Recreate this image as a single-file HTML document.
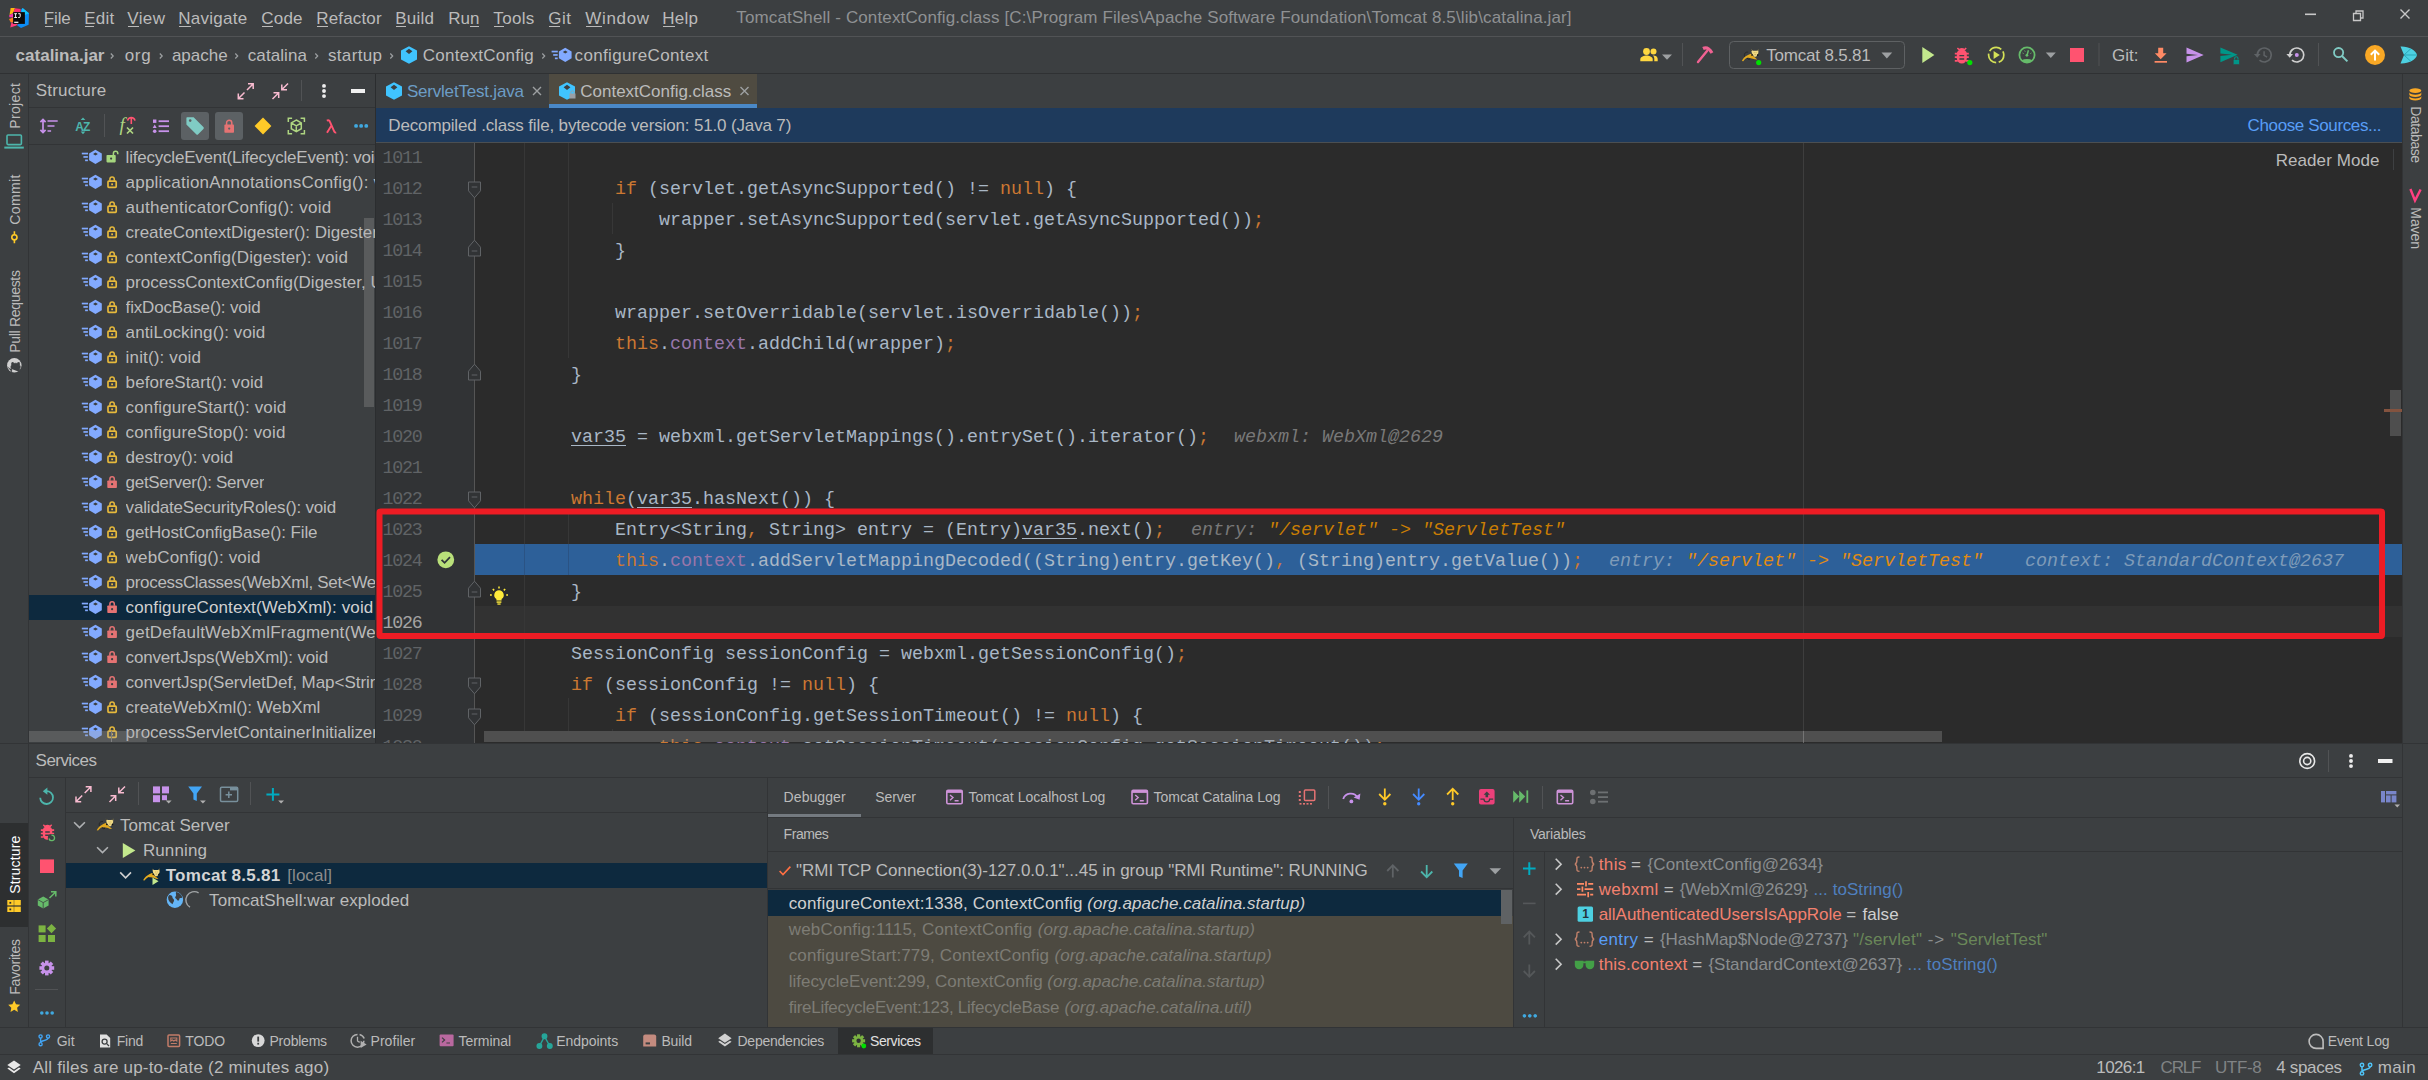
<!DOCTYPE html>
<html><head><meta charset="utf-8"><title>TomcatShell - ContextConfig.class</title>
<style>
html,body{margin:0;padding:0;}
body{width:2428px;height:1080px;overflow:hidden;position:relative;background:#3c3f41;font-family:"Liberation Sans",sans-serif;}
.r{position:absolute;}
.t{position:absolute;white-space:pre;margin:0;padding:0;}
svg{position:absolute;overflow:visible;}
.c{position:absolute;overflow:hidden;}
</style></head><body>
<div class="r" style="left:0px;top:36px;width:2428px;height:1px;background:#515355;"></div>
<div class="r" style="left:0px;top:73px;width:2428px;height:1px;background:#2f3133;"></div>
<div class="r" style="left:28px;top:74px;width:1px;height:953px;background:#323436;"></div>
<div class="r" style="left:2402px;top:74px;width:1px;height:953px;background:#323436;"></div>
<div class="r" style="left:29px;top:107px;width:347px;height:1px;background:#323436;"></div>
<div class="r" style="left:29px;top:144px;width:347px;height:1px;background:#323436;"></div>
<div class="r" style="left:375px;top:74px;width:1px;height:669px;background:#2b2d2f;"></div>
<div class="r" style="left:181px;top:112px;width:28px;height:28px;background:#5c6164;border-radius:3px;"></div>
<div class="r" style="left:215px;top:112px;width:28px;height:28px;background:#5c6164;border-radius:3px;"></div>
<div class="r" style="left:104px;top:114px;width:1px;height:23px;background:#515355;"></div>
<div class="r" style="left:301px;top:80px;width:1px;height:21px;background:#515355;"></div>
<div class="r" style="left:29px;top:595px;width:346px;height:25px;background:#0d293e;"></div>
<div class="r" style="left:549px;top:74px;width:208px;height:34px;background:#4f4b41;"></div>
<div class="r" style="left:549px;top:104px;width:208px;height:4px;background:#4a88c7;"></div>
<div class="r" style="left:376px;top:108px;width:2026px;height:34px;background:#1e3a5c;"></div>
<div class="r" style="left:376px;top:142px;width:2026px;height:1px;background:#4b4f52;"></div>
<div class="r" style="left:376px;top:143px;width:2026px;height:600px;background:#2b2b2b;"></div>
<div class="r" style="left:376px;top:143px;width:99px;height:600px;background:#313335;"></div>
<div class="r" style="left:474px;top:143px;width:1px;height:600px;background:#555555;"></div>
<div class="r" style="left:475px;top:606px;width:1927px;height:31px;background:#323232;"></div>
<div class="r" style="left:1803px;top:143px;width:1px;height:600px;background:#3e3e3e;"></div>
<div class="r" style="left:524px;top:143px;width:1px;height:600px;background:#373737;"></div>
<div class="r" style="left:568px;top:143px;width:1px;height:215px;background:#373737;"></div>
<div class="r" style="left:568px;top:513px;width:1px;height:62px;background:#373737;"></div>
<div class="r" style="left:568px;top:698px;width:1px;height:45px;background:#373737;"></div>
<div class="r" style="left:612px;top:729px;width:1px;height:14px;background:#373737;"></div>
<div class="r" style="left:612px;top:203px;width:1px;height:31px;background:#373737;"></div>
<div class="r" style="left:475px;top:544px;width:1927px;height:31px;background:#2d6099;"></div>
<div class="r" style="left:524px;top:544px;width:1px;height:31px;background:#2a5384;"></div>
<div class="r" style="left:568px;top:544px;width:1px;height:31px;background:#2a5384;"></div>
<div class="r" style="left:1803px;top:544px;width:1px;height:31px;background:#44628a;"></div>
<div class="r" style="left:2390px;top:390px;width:11px;height:46px;background:#4e4e4e;"></div>
<div class="r" style="left:2384px;top:409px;width:18px;height:3px;background:#84533f;"></div>
<div class="r" style="left:2393px;top:149px;width:1px;height:21px;background:#3e4042;"></div>
<div class="r" style="left:475px;top:731px;width:1927px;height:12px;background:#2b2b2b;"></div>
<div class="r" style="left:1803px;top:731px;width:1px;height:12px;background:#666666;"></div>
<div class="r" style="left:0px;top:743px;width:2428px;height:1px;background:#323436;"></div>
<div class="r" style="left:29px;top:777px;width:2373px;height:1px;background:#323436;"></div>
<div class="r" style="left:65px;top:778px;width:1px;height:249px;background:#323436;"></div>
<div class="r" style="left:66px;top:812px;width:701px;height:1px;background:#323436;"></div>
<div class="r" style="left:138px;top:782px;width:1px;height:23px;background:#515355;"></div>
<div class="r" style="left:250px;top:782px;width:1px;height:23px;background:#515355;"></div>
<div class="r" style="left:66px;top:863px;width:701px;height:25px;background:#0d293e;"></div>
<div class="r" style="left:767px;top:778px;width:1px;height:249px;background:#323436;"></div>
<div class="r" style="left:768px;top:814px;width:93px;height:3px;background:#747a80;"></div>
<div class="r" style="left:768px;top:817px;width:1634px;height:1px;background:#323436;"></div>
<div class="r" style="left:1328px;top:786px;width:1px;height:23px;background:#515355;"></div>
<div class="r" style="left:1542px;top:786px;width:1px;height:23px;background:#515355;"></div>
<div class="r" style="left:768px;top:851px;width:745px;height:1px;background:#323436;"></div>
<div class="r" style="left:1514px;top:851px;width:888px;height:1px;background:#323436;"></div>
<div class="r" style="left:768px;top:888px;width:745px;height:1px;background:#323436;"></div>
<div class="r" style="left:768px;top:890px;width:733px;height:26px;background:#0d293e;"></div>
<div class="r" style="left:768px;top:916px;width:745px;height:111px;background:#4d4a41;"></div>
<div class="r" style="left:1501px;top:890px;width:12px;height:26px;background:#3c3f41;"></div>
<div class="r" style="left:1501px;top:890px;width:11px;height:34px;background:#5f6264;"></div>
<div class="r" style="left:1513px;top:818px;width:1px;height:209px;background:#323436;"></div>
<div class="r" style="left:1544px;top:852px;width:1px;height:175px;background:#323436;"></div>
<div class="r" style="left:2328px;top:750px;width:1px;height:22px;background:#515355;"></div>
<div class="r" style="left:35px;top:989px;width:23px;height:1px;background:#515355;"></div>
<div class="r" style="left:0px;top:823px;width:28px;height:104px;background:#2d2f30;"></div>
<div class="r" style="left:0px;top:1027px;width:2428px;height:1px;background:#323436;"></div>
<div class="r" style="left:838px;top:1028px;width:95px;height:26px;background:#2d2f30;"></div>
<div class="r" style="left:0px;top:1054px;width:2428px;height:1px;background:#323436;"></div>
<div class="r" style="left:44.5px;top:26px;width:8px;height:1px;background:#bbbbbb;"></div>
<div class="r" style="left:85px;top:26px;width:8.5px;height:1px;background:#bbbbbb;"></div>
<div class="r" style="left:128px;top:26px;width:10.5px;height:1px;background:#bbbbbb;"></div>
<div class="r" style="left:179px;top:26px;width:12px;height:1px;background:#bbbbbb;"></div>
<div class="r" style="left:262px;top:26px;width:10.5px;height:1px;background:#bbbbbb;"></div>
<div class="r" style="left:317px;top:26px;width:10.5px;height:1px;background:#bbbbbb;"></div>
<div class="r" style="left:396px;top:26px;width:9.5px;height:1px;background:#bbbbbb;"></div>
<div class="r" style="left:469.5px;top:26px;width:9px;height:1px;background:#bbbbbb;"></div>
<div class="r" style="left:494px;top:26px;width:9.5px;height:1px;background:#bbbbbb;"></div>
<div class="r" style="left:549px;top:26px;width:11px;height:1px;background:#bbbbbb;"></div>
<div class="r" style="left:586px;top:26px;width:15.5px;height:1px;background:#bbbbbb;"></div>
<div class="r" style="left:663px;top:26px;width:11.5px;height:1px;background:#bbbbbb;"></div>
<svg style="left:0px;top:0px;pointer-events:none;" width="2428" height="1080" viewBox="0 0 2428 1080"><g fill="#82aaff"><rect x="81.8" y="152.7" width="6.2" height="1.7"/><rect x="83.39999999999999" y="156.1" width="4.5" height="1.7"/><rect x="85.1" y="159.5" width="2.8" height="1.7"/><path d="M95.44999999999999,149.8 L101.8,153.5 L101.8,160.3 L95.44999999999999,164 L89.1,160.3 L89.1,153.5Z"/></g><path d="M95.44999999999999,152.4 L97.85,153.9 L95.44999999999999,155.4 L93.04999999999998,153.9Z" fill="#3c3f41"/><rect x="106.5" y="155" width="9.2" height="7.4" rx="0.8" fill="#a5d67e"/><path d="M113.4,155 v-1.6 a2.2,2.2 0 0 1 4.4,0 v0.8" fill="none" stroke="#a5d67e" stroke-width="1.5"/><circle cx="111.1" cy="158.6" r="1.1" fill="#3c3f41"/><g fill="#82aaff"><rect x="81.8" y="177.7" width="6.2" height="1.7"/><rect x="83.39999999999999" y="181.1" width="4.5" height="1.7"/><rect x="85.1" y="184.5" width="2.8" height="1.7"/><path d="M95.44999999999999,174.8 L101.8,178.5 L101.8,185.3 L95.44999999999999,189 L89.1,185.3 L89.1,178.5Z"/></g><path d="M95.44999999999999,177.4 L97.85,178.9 L95.44999999999999,180.4 L93.04999999999998,178.9Z" fill="#3c3f41"/><rect x="108.0" y="181.1" width="8.2" height="6.2" rx="0.8" fill="none" stroke="#e6b93c" stroke-width="1.7"/><path d="M109.9,180.8 v-1.6 a2.2,2.2 0 0 1 4.4,0 v1.6" fill="none" stroke="#e6b93c" stroke-width="1.5"/><rect x="111.2" y="183.4" width="1.8" height="1.8" fill="#e6b93c"/><g fill="#82aaff"><rect x="81.8" y="202.7" width="6.2" height="1.7"/><rect x="83.39999999999999" y="206.1" width="4.5" height="1.7"/><rect x="85.1" y="209.5" width="2.8" height="1.7"/><path d="M95.44999999999999,199.8 L101.8,203.5 L101.8,210.3 L95.44999999999999,214 L89.1,210.3 L89.1,203.5Z"/></g><path d="M95.44999999999999,202.4 L97.85,203.9 L95.44999999999999,205.4 L93.04999999999998,203.9Z" fill="#3c3f41"/><rect x="108.0" y="206.1" width="8.2" height="6.2" rx="0.8" fill="none" stroke="#e6b93c" stroke-width="1.7"/><path d="M109.9,205.8 v-1.6 a2.2,2.2 0 0 1 4.4,0 v1.6" fill="none" stroke="#e6b93c" stroke-width="1.5"/><rect x="111.2" y="208.4" width="1.8" height="1.8" fill="#e6b93c"/><g fill="#82aaff"><rect x="81.8" y="227.7" width="6.2" height="1.7"/><rect x="83.39999999999999" y="231.1" width="4.5" height="1.7"/><rect x="85.1" y="234.5" width="2.8" height="1.7"/><path d="M95.44999999999999,224.8 L101.8,228.5 L101.8,235.3 L95.44999999999999,239 L89.1,235.3 L89.1,228.5Z"/></g><path d="M95.44999999999999,227.4 L97.85,228.9 L95.44999999999999,230.4 L93.04999999999998,228.9Z" fill="#3c3f41"/><rect x="108.0" y="231.1" width="8.2" height="6.2" rx="0.8" fill="none" stroke="#e6b93c" stroke-width="1.7"/><path d="M109.9,230.8 v-1.6 a2.2,2.2 0 0 1 4.4,0 v1.6" fill="none" stroke="#e6b93c" stroke-width="1.5"/><rect x="111.2" y="233.4" width="1.8" height="1.8" fill="#e6b93c"/><g fill="#82aaff"><rect x="81.8" y="252.7" width="6.2" height="1.7"/><rect x="83.39999999999999" y="256.1" width="4.5" height="1.7"/><rect x="85.1" y="259.5" width="2.8" height="1.7"/><path d="M95.44999999999999,249.8 L101.8,253.5 L101.8,260.3 L95.44999999999999,264 L89.1,260.3 L89.1,253.5Z"/></g><path d="M95.44999999999999,252.4 L97.85,253.9 L95.44999999999999,255.4 L93.04999999999998,253.9Z" fill="#3c3f41"/><rect x="108.0" y="256.1" width="8.2" height="6.2" rx="0.8" fill="none" stroke="#e6b93c" stroke-width="1.7"/><path d="M109.9,255.8 v-1.6 a2.2,2.2 0 0 1 4.4,0 v1.6" fill="none" stroke="#e6b93c" stroke-width="1.5"/><rect x="111.2" y="258.4" width="1.8" height="1.8" fill="#e6b93c"/><g fill="#82aaff"><rect x="81.8" y="277.7" width="6.2" height="1.7"/><rect x="83.39999999999999" y="281.1" width="4.5" height="1.7"/><rect x="85.1" y="284.5" width="2.8" height="1.7"/><path d="M95.44999999999999,274.8 L101.8,278.5 L101.8,285.3 L95.44999999999999,289 L89.1,285.3 L89.1,278.5Z"/></g><path d="M95.44999999999999,277.4 L97.85,278.9 L95.44999999999999,280.4 L93.04999999999998,278.9Z" fill="#3c3f41"/><rect x="108.0" y="281.1" width="8.2" height="6.2" rx="0.8" fill="none" stroke="#e6b93c" stroke-width="1.7"/><path d="M109.9,280.8 v-1.6 a2.2,2.2 0 0 1 4.4,0 v1.6" fill="none" stroke="#e6b93c" stroke-width="1.5"/><rect x="111.2" y="283.4" width="1.8" height="1.8" fill="#e6b93c"/><g fill="#82aaff"><rect x="81.8" y="302.7" width="6.2" height="1.7"/><rect x="83.39999999999999" y="306.1" width="4.5" height="1.7"/><rect x="85.1" y="309.5" width="2.8" height="1.7"/><path d="M95.44999999999999,299.8 L101.8,303.5 L101.8,310.3 L95.44999999999999,314 L89.1,310.3 L89.1,303.5Z"/></g><path d="M95.44999999999999,302.4 L97.85,303.9 L95.44999999999999,305.4 L93.04999999999998,303.9Z" fill="#3c3f41"/><rect x="108.0" y="306.1" width="8.2" height="6.2" rx="0.8" fill="none" stroke="#e6b93c" stroke-width="1.7"/><path d="M109.9,305.8 v-1.6 a2.2,2.2 0 0 1 4.4,0 v1.6" fill="none" stroke="#e6b93c" stroke-width="1.5"/><rect x="111.2" y="308.4" width="1.8" height="1.8" fill="#e6b93c"/><g fill="#82aaff"><rect x="81.8" y="327.7" width="6.2" height="1.7"/><rect x="83.39999999999999" y="331.1" width="4.5" height="1.7"/><rect x="85.1" y="334.5" width="2.8" height="1.7"/><path d="M95.44999999999999,324.8 L101.8,328.5 L101.8,335.3 L95.44999999999999,339 L89.1,335.3 L89.1,328.5Z"/></g><path d="M95.44999999999999,327.4 L97.85,328.9 L95.44999999999999,330.4 L93.04999999999998,328.9Z" fill="#3c3f41"/><rect x="108.0" y="331.1" width="8.2" height="6.2" rx="0.8" fill="none" stroke="#e6b93c" stroke-width="1.7"/><path d="M109.9,330.8 v-1.6 a2.2,2.2 0 0 1 4.4,0 v1.6" fill="none" stroke="#e6b93c" stroke-width="1.5"/><rect x="111.2" y="333.4" width="1.8" height="1.8" fill="#e6b93c"/><g fill="#82aaff"><rect x="81.8" y="352.7" width="6.2" height="1.7"/><rect x="83.39999999999999" y="356.1" width="4.5" height="1.7"/><rect x="85.1" y="359.5" width="2.8" height="1.7"/><path d="M95.44999999999999,349.8 L101.8,353.5 L101.8,360.3 L95.44999999999999,364 L89.1,360.3 L89.1,353.5Z"/></g><path d="M95.44999999999999,352.4 L97.85,353.9 L95.44999999999999,355.4 L93.04999999999998,353.9Z" fill="#3c3f41"/><rect x="108.0" y="356.1" width="8.2" height="6.2" rx="0.8" fill="none" stroke="#e6b93c" stroke-width="1.7"/><path d="M109.9,355.8 v-1.6 a2.2,2.2 0 0 1 4.4,0 v1.6" fill="none" stroke="#e6b93c" stroke-width="1.5"/><rect x="111.2" y="358.4" width="1.8" height="1.8" fill="#e6b93c"/><g fill="#82aaff"><rect x="81.8" y="377.7" width="6.2" height="1.7"/><rect x="83.39999999999999" y="381.1" width="4.5" height="1.7"/><rect x="85.1" y="384.5" width="2.8" height="1.7"/><path d="M95.44999999999999,374.8 L101.8,378.5 L101.8,385.3 L95.44999999999999,389 L89.1,385.3 L89.1,378.5Z"/></g><path d="M95.44999999999999,377.4 L97.85,378.9 L95.44999999999999,380.4 L93.04999999999998,378.9Z" fill="#3c3f41"/><rect x="108.0" y="381.1" width="8.2" height="6.2" rx="0.8" fill="none" stroke="#e6b93c" stroke-width="1.7"/><path d="M109.9,380.8 v-1.6 a2.2,2.2 0 0 1 4.4,0 v1.6" fill="none" stroke="#e6b93c" stroke-width="1.5"/><rect x="111.2" y="383.4" width="1.8" height="1.8" fill="#e6b93c"/><g fill="#82aaff"><rect x="81.8" y="402.7" width="6.2" height="1.7"/><rect x="83.39999999999999" y="406.1" width="4.5" height="1.7"/><rect x="85.1" y="409.5" width="2.8" height="1.7"/><path d="M95.44999999999999,399.8 L101.8,403.5 L101.8,410.3 L95.44999999999999,414 L89.1,410.3 L89.1,403.5Z"/></g><path d="M95.44999999999999,402.4 L97.85,403.9 L95.44999999999999,405.4 L93.04999999999998,403.9Z" fill="#3c3f41"/><rect x="108.0" y="406.1" width="8.2" height="6.2" rx="0.8" fill="none" stroke="#e6b93c" stroke-width="1.7"/><path d="M109.9,405.8 v-1.6 a2.2,2.2 0 0 1 4.4,0 v1.6" fill="none" stroke="#e6b93c" stroke-width="1.5"/><rect x="111.2" y="408.4" width="1.8" height="1.8" fill="#e6b93c"/><g fill="#82aaff"><rect x="81.8" y="427.7" width="6.2" height="1.7"/><rect x="83.39999999999999" y="431.1" width="4.5" height="1.7"/><rect x="85.1" y="434.5" width="2.8" height="1.7"/><path d="M95.44999999999999,424.8 L101.8,428.5 L101.8,435.3 L95.44999999999999,439 L89.1,435.3 L89.1,428.5Z"/></g><path d="M95.44999999999999,427.4 L97.85,428.9 L95.44999999999999,430.4 L93.04999999999998,428.9Z" fill="#3c3f41"/><rect x="108.0" y="431.1" width="8.2" height="6.2" rx="0.8" fill="none" stroke="#e6b93c" stroke-width="1.7"/><path d="M109.9,430.8 v-1.6 a2.2,2.2 0 0 1 4.4,0 v1.6" fill="none" stroke="#e6b93c" stroke-width="1.5"/><rect x="111.2" y="433.4" width="1.8" height="1.8" fill="#e6b93c"/><g fill="#82aaff"><rect x="81.8" y="452.7" width="6.2" height="1.7"/><rect x="83.39999999999999" y="456.1" width="4.5" height="1.7"/><rect x="85.1" y="459.5" width="2.8" height="1.7"/><path d="M95.44999999999999,449.8 L101.8,453.5 L101.8,460.3 L95.44999999999999,464 L89.1,460.3 L89.1,453.5Z"/></g><path d="M95.44999999999999,452.4 L97.85,453.9 L95.44999999999999,455.4 L93.04999999999998,453.9Z" fill="#3c3f41"/><rect x="108.0" y="456.1" width="8.2" height="6.2" rx="0.8" fill="none" stroke="#e6b93c" stroke-width="1.7"/><path d="M109.9,455.8 v-1.6 a2.2,2.2 0 0 1 4.4,0 v1.6" fill="none" stroke="#e6b93c" stroke-width="1.5"/><rect x="111.2" y="458.4" width="1.8" height="1.8" fill="#e6b93c"/><g fill="#82aaff"><rect x="81.8" y="477.7" width="6.2" height="1.7"/><rect x="83.39999999999999" y="481.1" width="4.5" height="1.7"/><rect x="85.1" y="484.5" width="2.8" height="1.7"/><path d="M95.44999999999999,474.8 L101.8,478.5 L101.8,485.3 L95.44999999999999,489 L89.1,485.3 L89.1,478.5Z"/></g><path d="M95.44999999999999,477.4 L97.85,478.9 L95.44999999999999,480.4 L93.04999999999998,478.9Z" fill="#3c3f41"/><rect x="107.3" y="480.4" width="9.6" height="7.6" rx="0.8" fill="#e57373"/><path d="M109.9,480.8 v-1.8 a2.2,2.2 0 0 1 4.4,0 v1.8" fill="none" stroke="#e57373" stroke-width="1.5"/><circle cx="112.1" cy="484.2" r="1.1" fill="#3c3f41"/><g fill="#82aaff"><rect x="81.8" y="502.7" width="6.2" height="1.7"/><rect x="83.39999999999999" y="506.1" width="4.5" height="1.7"/><rect x="85.1" y="509.5" width="2.8" height="1.7"/><path d="M95.44999999999999,499.8 L101.8,503.5 L101.8,510.3 L95.44999999999999,514 L89.1,510.3 L89.1,503.5Z"/></g><path d="M95.44999999999999,502.4 L97.85,503.9 L95.44999999999999,505.4 L93.04999999999998,503.9Z" fill="#3c3f41"/><rect x="108.0" y="506.1" width="8.2" height="6.2" rx="0.8" fill="none" stroke="#e6b93c" stroke-width="1.7"/><path d="M109.9,505.8 v-1.6 a2.2,2.2 0 0 1 4.4,0 v1.6" fill="none" stroke="#e6b93c" stroke-width="1.5"/><rect x="111.2" y="508.4" width="1.8" height="1.8" fill="#e6b93c"/><g fill="#82aaff"><rect x="81.8" y="527.7" width="6.2" height="1.7"/><rect x="83.39999999999999" y="531.1" width="4.5" height="1.7"/><rect x="85.1" y="534.5" width="2.8" height="1.7"/><path d="M95.44999999999999,524.8 L101.8,528.5 L101.8,535.3 L95.44999999999999,539 L89.1,535.3 L89.1,528.5Z"/></g><path d="M95.44999999999999,527.4 L97.85,528.9 L95.44999999999999,530.4 L93.04999999999998,528.9Z" fill="#3c3f41"/><rect x="108.0" y="531.1" width="8.2" height="6.2" rx="0.8" fill="none" stroke="#e6b93c" stroke-width="1.7"/><path d="M109.9,530.8 v-1.6 a2.2,2.2 0 0 1 4.4,0 v1.6" fill="none" stroke="#e6b93c" stroke-width="1.5"/><rect x="111.2" y="533.4" width="1.8" height="1.8" fill="#e6b93c"/><g fill="#82aaff"><rect x="81.8" y="552.7" width="6.2" height="1.7"/><rect x="83.39999999999999" y="556.1" width="4.5" height="1.7"/><rect x="85.1" y="559.5" width="2.8" height="1.7"/><path d="M95.44999999999999,549.8 L101.8,553.5 L101.8,560.3 L95.44999999999999,564 L89.1,560.3 L89.1,553.5Z"/></g><path d="M95.44999999999999,552.4 L97.85,553.9 L95.44999999999999,555.4 L93.04999999999998,553.9Z" fill="#3c3f41"/><rect x="108.0" y="556.1" width="8.2" height="6.2" rx="0.8" fill="none" stroke="#e6b93c" stroke-width="1.7"/><path d="M109.9,555.8 v-1.6 a2.2,2.2 0 0 1 4.4,0 v1.6" fill="none" stroke="#e6b93c" stroke-width="1.5"/><rect x="111.2" y="558.4" width="1.8" height="1.8" fill="#e6b93c"/><g fill="#82aaff"><rect x="81.8" y="577.7" width="6.2" height="1.7"/><rect x="83.39999999999999" y="581.1" width="4.5" height="1.7"/><rect x="85.1" y="584.5" width="2.8" height="1.7"/><path d="M95.44999999999999,574.8 L101.8,578.5 L101.8,585.3 L95.44999999999999,589 L89.1,585.3 L89.1,578.5Z"/></g><path d="M95.44999999999999,577.4 L97.85,578.9 L95.44999999999999,580.4 L93.04999999999998,578.9Z" fill="#3c3f41"/><rect x="108.0" y="581.1" width="8.2" height="6.2" rx="0.8" fill="none" stroke="#e6b93c" stroke-width="1.7"/><path d="M109.9,580.8 v-1.6 a2.2,2.2 0 0 1 4.4,0 v1.6" fill="none" stroke="#e6b93c" stroke-width="1.5"/><rect x="111.2" y="583.4" width="1.8" height="1.8" fill="#e6b93c"/><g fill="#82aaff"><rect x="81.8" y="602.7" width="6.2" height="1.7"/><rect x="83.39999999999999" y="606.1" width="4.5" height="1.7"/><rect x="85.1" y="609.5" width="2.8" height="1.7"/><path d="M95.44999999999999,599.8 L101.8,603.5 L101.8,610.3 L95.44999999999999,614 L89.1,610.3 L89.1,603.5Z"/></g><path d="M95.44999999999999,602.4 L97.85,603.9 L95.44999999999999,605.4 L93.04999999999998,603.9Z" fill="#3c3f41"/><rect x="107.3" y="605.4" width="9.6" height="7.6" rx="0.8" fill="#e57373"/><path d="M109.9,605.8 v-1.8 a2.2,2.2 0 0 1 4.4,0 v1.8" fill="none" stroke="#e57373" stroke-width="1.5"/><circle cx="112.1" cy="609.2" r="1.1" fill="#3c3f41"/><g fill="#82aaff"><rect x="81.8" y="627.7" width="6.2" height="1.7"/><rect x="83.39999999999999" y="631.1" width="4.5" height="1.7"/><rect x="85.1" y="634.5" width="2.8" height="1.7"/><path d="M95.44999999999999,624.8 L101.8,628.5 L101.8,635.3 L95.44999999999999,639 L89.1,635.3 L89.1,628.5Z"/></g><path d="M95.44999999999999,627.4 L97.85,628.9 L95.44999999999999,630.4 L93.04999999999998,628.9Z" fill="#3c3f41"/><rect x="107.3" y="630.4" width="9.6" height="7.6" rx="0.8" fill="#e57373"/><path d="M109.9,630.8 v-1.8 a2.2,2.2 0 0 1 4.4,0 v1.8" fill="none" stroke="#e57373" stroke-width="1.5"/><circle cx="112.1" cy="634.2" r="1.1" fill="#3c3f41"/><g fill="#82aaff"><rect x="81.8" y="652.7" width="6.2" height="1.7"/><rect x="83.39999999999999" y="656.1" width="4.5" height="1.7"/><rect x="85.1" y="659.5" width="2.8" height="1.7"/><path d="M95.44999999999999,649.8 L101.8,653.5 L101.8,660.3 L95.44999999999999,664 L89.1,660.3 L89.1,653.5Z"/></g><path d="M95.44999999999999,652.4 L97.85,653.9 L95.44999999999999,655.4 L93.04999999999998,653.9Z" fill="#3c3f41"/><rect x="107.3" y="655.4" width="9.6" height="7.6" rx="0.8" fill="#e57373"/><path d="M109.9,655.8 v-1.8 a2.2,2.2 0 0 1 4.4,0 v1.8" fill="none" stroke="#e57373" stroke-width="1.5"/><circle cx="112.1" cy="659.2" r="1.1" fill="#3c3f41"/><g fill="#82aaff"><rect x="81.8" y="677.7" width="6.2" height="1.7"/><rect x="83.39999999999999" y="681.1" width="4.5" height="1.7"/><rect x="85.1" y="684.5" width="2.8" height="1.7"/><path d="M95.44999999999999,674.8 L101.8,678.5 L101.8,685.3 L95.44999999999999,689 L89.1,685.3 L89.1,678.5Z"/></g><path d="M95.44999999999999,677.4 L97.85,678.9 L95.44999999999999,680.4 L93.04999999999998,678.9Z" fill="#3c3f41"/><rect x="107.3" y="680.4" width="9.6" height="7.6" rx="0.8" fill="#e57373"/><path d="M109.9,680.8 v-1.8 a2.2,2.2 0 0 1 4.4,0 v1.8" fill="none" stroke="#e57373" stroke-width="1.5"/><circle cx="112.1" cy="684.2" r="1.1" fill="#3c3f41"/><g fill="#82aaff"><rect x="81.8" y="702.7" width="6.2" height="1.7"/><rect x="83.39999999999999" y="706.1" width="4.5" height="1.7"/><rect x="85.1" y="709.5" width="2.8" height="1.7"/><path d="M95.44999999999999,699.8 L101.8,703.5 L101.8,710.3 L95.44999999999999,714 L89.1,710.3 L89.1,703.5Z"/></g><path d="M95.44999999999999,702.4 L97.85,703.9 L95.44999999999999,705.4 L93.04999999999998,703.9Z" fill="#3c3f41"/><rect x="108.0" y="706.1" width="8.2" height="6.2" rx="0.8" fill="none" stroke="#e6b93c" stroke-width="1.7"/><path d="M109.9,705.8 v-1.6 a2.2,2.2 0 0 1 4.4,0 v1.6" fill="none" stroke="#e6b93c" stroke-width="1.5"/><rect x="111.2" y="708.4" width="1.8" height="1.8" fill="#e6b93c"/><g fill="#82aaff"><rect x="81.8" y="727.7" width="6.2" height="1.7"/><rect x="83.39999999999999" y="731.1" width="4.5" height="1.7"/><rect x="85.1" y="734.5" width="2.8" height="1.7"/><path d="M95.44999999999999,724.8 L101.8,728.5 L101.8,735.3 L95.44999999999999,739 L89.1,735.3 L89.1,728.5Z"/></g><path d="M95.44999999999999,727.4 L97.85,728.9 L95.44999999999999,730.4 L93.04999999999998,728.9Z" fill="#3c3f41"/><rect x="108.0" y="731.1" width="8.2" height="6.2" rx="0.8" fill="none" stroke="#e6b93c" stroke-width="1.7"/><path d="M109.9,730.8 v-1.6 a2.2,2.2 0 0 1 4.4,0 v1.6" fill="none" stroke="#e6b93c" stroke-width="1.5"/><rect x="111.2" y="733.4" width="1.8" height="1.8" fill="#e6b93c"/><path d="M409.0,46.2 L417,50.6 L417,59.4 L409.0,63.8 L401,59.4 L401,50.6Z" fill="#40c4ff"/><path d="M409.0,48.800000000000004 L412.4,51.2 L409.0,54.1 L405.6,51.2Z" fill="#3c3f41"/><path d="M394.0,82.2 L402,86.6 L402,95.4 L394.0,99.8 L386,95.4 L386,86.6Z" fill="#40c4ff"/><path d="M394.0,84.8 L397.4,87.19999999999999 L394.0,90.1 L390.6,87.19999999999999Z" fill="#3c3f41"/><path d="M567.0,82.2 L575,86.6 L575,95.4 L567.0,99.8 L559,95.4 L559,86.6Z" fill="#40c4ff"/><path d="M567.0,84.8 L570.4,87.19999999999999 L567.0,90.1 L563.6,87.19999999999999Z" fill="#3c3f41"/><rect x="569.5" y="93.5" width="6" height="5" fill="#9aa0a6"/><path d="M570.8,93.5 v-1 a1.7,1.7 0 0 1 3.4,0 v1" fill="none" stroke="#9aa0a6" stroke-width="1"/><g fill="#82aaff"><rect x="551.6" y="50.7" width="6.2" height="1.7"/><rect x="553.2" y="54.1" width="4.5" height="1.7"/><rect x="554.9" y="57.5" width="2.8" height="1.7"/><path d="M565.25,47.8 L571.6,51.5 L571.6,58.3 L565.25,62 L558.9,58.3 L558.9,51.5Z"/></g><path d="M565.25,50.4 L567.65,51.9 L565.25,53.4 L562.85,51.9Z" fill="#3c3f41"/><path d="M110.8,53.5 l2.4,2.5 l-2.4,2.5" fill="none" stroke="#9da0a2" stroke-width="1.2"/><path d="M159.8,53.5 l2.4,2.5 l-2.4,2.5" fill="none" stroke="#9da0a2" stroke-width="1.2"/><path d="M235.3,53.5 l2.4,2.5 l-2.4,2.5" fill="none" stroke="#9da0a2" stroke-width="1.2"/><path d="M315.3,53.5 l2.4,2.5 l-2.4,2.5" fill="none" stroke="#9da0a2" stroke-width="1.2"/><path d="M390.3,53.5 l2.4,2.5 l-2.4,2.5" fill="none" stroke="#9da0a2" stroke-width="1.2"/><path d="M542.3,53.5 l2.4,2.5 l-2.4,2.5" fill="none" stroke="#9da0a2" stroke-width="1.2"/><path d="M533,87 l8,8 M541,87 l-8,8" stroke="#9da0a2" stroke-width="1.4"/><path d="M740.5,87 l8,8 M748.5,87 l-8,8" stroke="#9da0a2" stroke-width="1.4"/><g><path d="M10.700,8 L15,8 L13.200,13 L9.500,15Z" fill="#fdb60d"/><path d="M15,8.200 L20.600,9 L20.800,12.200 L13.200,12.200Z" fill="#fe2c6c"/><path d="M9,15.500 L13.200,13.200 L13.200,17.500 L9.500,17.200Z" fill="#f936b0"/><path d="M9,19 L13.200,17.400 L13.200,22.400 L10.600,22.200Z" fill="#fc801d"/><path d="M10.300,27.600 L11.500,22 L13.200,23.800 L18.200,23.800 L16.400,25.600Z" fill="#fe3b7a"/><path d="M22.600,8.100 L29,13.200 L28.600,24.700 L21,28 L17,25.200 L18.400,23.800 L24.800,23.800 L24.800,12.200 L20.800,12.200 L21,9.800Z" fill="#0c8df7"/><path d="M22.600,8.100 L29,13.200 L24.800,15 L24.800,12.200 L21.400,12.200Z" fill="#12c4fb"/><rect x="13.200" y="12.200" width="11.600" height="11.600" fill="#0a0a0a"/><rect x="14.200" y="21.700" width="4.200" height="1.200" fill="#fff"/><path d="M14.200,13.700 h2.800 M15.600,13.700 v4 M14.200,17.500 h2.800 M18.200,13.700 h2 v2.700 q0,1.200 -1.200,1.200 q-0.800,0 -1.100,-0.600" stroke="#fff" stroke-width="0.950" fill="none"/></g><rect x="2305" y="13.5" width="11" height="1.6" fill="#c8c8c8"/><path d="M2353.5,13.5 h7 v7 h-7z M2356,13.5 v-2.5 h7 v7 h-2.5" fill="none" stroke="#c8c8c8" stroke-width="1.3"/><path d="M2400.5,9.5 l9,9 M2409.5,9.5 l-9,9" stroke="#c8c8c8" stroke-width="1.4"/><g fill="#ffd740"><circle cx="1646.5" cy="51.5" r="3.4"/><path d="M1640.3,61.2 v-2.2 c0,-2.4 4,-3.6 6.2,-3.6 s6.2,1.2 6.2,3.6 v2.2z"/><circle cx="1653.5" cy="51.5" r="3"/><path d="M1653.5,55.4 c2,0 4.2,1.2 4.2,3.4 v2.4 h-3.4 v-2.4 c0,-1.5 -0.6,-2.6 -1.6,-3.3z"/></g><path d="M1662,54.5 L1672,54.5 L1667.0,59.8Z" fill="#9da0a2"/><rect x="1682" y="43" width="1" height="23" fill="#515355"/><g stroke="#f06292" fill="none" stroke-linecap="round"><path d="M1698,62 L1707,51" stroke-width="2.4"/><path d="M1703,48.5 C1706,47 1709,48 1712,53" stroke-width="3.2" stroke-linecap="butt"/></g><rect x="1729.5" y="41.5" width="175" height="27" rx="4" fill="none" stroke="#5e6163" stroke-width="1"/><g transform="translate(1742,48) scale(1.0)"><path d="M6.2,4.200 C3.600,3.800 1.800,5.200 2.600,8.800" fill="none" stroke="#26282a" stroke-width="1"/><path d="M-0.100,12.900 C1.400,10.400 2.600,9 4.100,8.100 C5.800,7 7.200,6.200 8.800,5.700 L11.200,8 C12.600,9.400 14.200,10.200 15.400,11.600 L12.600,11.300 C10.800,10.400 9,10 7.400,9.900 C6,9.800 5,9.900 4.100,10.300 C3,11 2.200,12.200 1.300,13.200 Z" fill="#e2a91f"/><path d="M9,1.300 L10.900,2.700 L14.800,2.700 L16.500,1.200 L16.300,5.200 L14.100,8.800 L12.200,8.800 L9.900,5.300Z" fill="#f2dc86"/><path d="M9,1.300 l1.300,1.100 l-1,0.600z M16.500,1.200 l-1.300,1.100 l1.100,0.700z" fill="#1e1e1e"/><circle cx="10" cy="7.100" r="0.800" fill="#111"/><circle cx="15.700" cy="7.100" r="0.800" fill="#111"/><path d="M5.200,10.300 l1.600,1 l1.400,-0.400" fill="none" stroke="#1e1e1e" stroke-width="0.900"/><path d="M11.800,4.600 h0.900 M13.600,4.600 h0.900 M12.500,6.600 h1.400" stroke="#b99b4a" stroke-width="0.700"/></g><circle cx="1758.7" cy="62.6" r="2.6" fill="#00e000"/><path d="M1881.5,52.4 L1892.2,52.4 L1886.85,58.4Z" fill="#9da0a2"/><path d="M1922.3,47 L1934.4,55 L1922.3,63Z" fill="#c3e88d"/><g transform="translate(1961.8,56.2) scale(1.0)" fill="#ff5370" stroke="#ff5370"><path d="M-5,-2.400 a5,4.200 0 0 1 10,0 v4.400 a5,5.400 0 0 1 -10,0z" stroke="none"/><path d="M-3,-5.800 a3,2.400 0 0 1 6,0z" stroke="none"/><path d="M-7,-2.600 h3 M-7,1 h3 M-7,4.600 h3 M4,-2.600 h3 M4,1 h3 M4,4.600 h3" stroke-width="1.700" fill="none"/><path d="M-4.400,-8.300 l2,2.200 M4.400,-8.300 l-2,2.200" stroke-width="1.500" fill="none"/><path d="M-2.400,-0.600 h4.800 M-2.400,2.800 h4.800" stroke="#3c3f41" stroke-width="1.400"/></g><circle cx="1969.8" cy="62.6" r="2.6" fill="#00e000"/><circle cx="1996.2" cy="55" r="7.6" fill="none" stroke="#d4e157" stroke-width="1.700" stroke-dasharray="13.300 2.600" stroke-dashoffset="4"/><path d="M1993.6,51 L1999.8,55 L1993.6,59Z" fill="#d4e157"/><circle cx="2027" cy="55" r="7.6" fill="none" stroke="#66bb6a" stroke-width="1.8"/><path d="M2021.400,60.400 a8,5 0 0 1 11.200,0 a7.600,7.600 0 0 1 -11.200,0z" fill="#66bb6a"/><path d="M2027,55.400 L2028.400,50.200" stroke="#66bb6a" stroke-width="1.500"/><circle cx="2026.900" cy="55.300" r="1.400" fill="#66bb6a"/><path d="M2022.6,53 l1,0.6 M2024.6,50.6 l0.6,1 M2031.4,53 l-1,0.6" stroke="#66bb6a" stroke-width="1"/><path d="M2045.8,52.4 L2055.8,52.4 L2050.8,58Z" fill="#9da0a2"/><rect x="2070" y="48" width="14" height="14" fill="#ff5370"/><rect x="2098.5" y="43" width="1" height="23" fill="#515355"/><g fill="#ff8a65"><path d="M2158.200,47.800 h5 v5.400 h3.400 l-5.900,6 l-5.900,-6 h3.400z"/><rect x="2154.6" y="61" width="12.4" height="1.7"/></g><path d="M2186.500,47.600 L2203.700,55 L2186.500,62.400 L2186.500,56.200 L2198,55 L2186.500,53.800Z" fill="#c792ea"/><path d="M2220.400,47.400 L2237.600,54.800 L2220.400,62.200 L2220.400,56 L2232,54.800 L2220.400,53.600Z" fill="#009688"/><rect x="2233.2" y="59.6" width="6.2" height="5" fill="#009688" stroke="#3c3f41" stroke-width="0.6"/><path d="M2234.6,59.6 v-1.2 a1.7,1.7 0 0 1 3.4,0 v1.2" fill="none" stroke="#009688" stroke-width="1.1"/><path d="M2257.3,55 a7,7 0 1 1 2.2,5.1" fill="none" stroke="#5f6366" stroke-width="1.7"/><path d="M2253.9,54 h6.6 l-3.3,3.8z" fill="#5f6366"/><path d="M2264.1,51.2 v4.2 l3,1.8" fill="none" stroke="#5f6366" stroke-width="1.5"/><path d="M2289.8,55 a7,7 0 1 1 2.2,5.1" fill="none" stroke="#d0d0d0" stroke-width="1.7"/><path d="M2286.4,54 h6.6 l-3.3,3.8z" fill="#d0d0d0"/><circle cx="2296.8" cy="55" r="2" fill="#c792ea"/><rect x="2318" y="43" width="1" height="23" fill="#515355"/><circle cx="2338.6" cy="52.6" r="4.6" fill="none" stroke="#80cbc4" stroke-width="1.8"/><path d="M2342,56 L2347.4,61.4" stroke="#80cbc4" stroke-width="2"/><circle cx="2375" cy="55" r="10" fill="#f9a825"/><path d="M2375,60.5 v-9 M2370.8,54.8 l4.2,-4.2 l4.2,4.2" fill="none" stroke="#fff" stroke-width="2"/><path d="M2400.5,46.5 C2408,46 2416,50 2417,55 C2416,60 2408,64 2400.5,63.5 L2404,55Z" fill="#4dd0e1"/><path d="M2404,55 L2417,55 M2404,55 L2411,48.5 M2404,55 L2411,61.5" stroke="#2aa7b8" stroke-width="1"/><g stroke="#f8bbd0" stroke-width="1.5" fill="none"><path d="M247.0,90 L253.0,84 M248.0,83.8 h5.2 v5.2"/><path d="M244.5,92.5 L238.5,98.5 M238.3,93.5 v5.2 h5.2"/></g><g stroke="#f8bbd0" stroke-width="1.5" fill="none"><path d="M288,83.5 L282,89.5 M281.8,84.5 v5.2 h5.2"/><path d="M272.5,99 L278.5,93 M273.5,92.8 h5.2 v5.2"/></g><circle cx="324" cy="85.9" r="1.950" fill="#ececec"/><circle cx="324" cy="91" r="1.950" fill="#ececec"/><circle cx="324" cy="96.1" r="1.950" fill="#ececec"/><rect x="351" y="89" width="14" height="4" fill="#f0f0f0"/><g stroke="#c792ea" fill="none" stroke-width="1.7"><path d="M43,120 v12 M40.4,122.2 l2.6,-2.8 l2.6,2.8 M40.4,129.8 l2.6,2.8 l2.6,-2.8"/><path d="M47.5,121 h10.2 M47.5,126 h7 M47.5,131 h3.6"/></g><g fill="#4db6ac"><path d="M83,117.5 l2.4,2.6 h-4.8z M83,134.2 l2.4,-2.6 h-4.8z"/></g><path d="M127,127.5 l6,6 M133,127.5 l-6,6" stroke="#aed581" stroke-width="1.7"/><path d="M131.3,124 v-6.5 M127.6,120.6 a3.8,3.8 0 0 1 7.4,0" stroke="#ff5370" stroke-width="1.6" fill="none"/><g fill="#c792ea"><rect x="153" y="119.5" width="3.4" height="3.4"/><path d="M154.7,124.6 l2,3.4 h-4z"/><circle cx="154.7" cy="131.2" r="1.8"/><rect x="158.6" y="120.3" width="10.4" height="1.8"/><rect x="158.6" y="125.3" width="10.4" height="1.8"/><rect x="158.6" y="130.3" width="10.4" height="1.8"/></g><path d="M187,119.5 h6.6 l9.8,9.8 a1.4,1.4 0 0 1 0,2 l-5.2,5.2 a1.4,1.4 0 0 1 -2,0 l-9.8,-9.8 v-6.6z" fill="#80cbc4" transform="translate(0,-2.3)"/><circle cx="190.2" cy="120.6" r="1.3" fill="#5c6164"/><rect x="224.4" y="124.6" width="9.6" height="8.2" rx="0.8" fill="#e57373"/><path d="M226.6,125 v-2.2 a2.6,2.6 0 0 1 5.2,0 v2.2" fill="none" stroke="#e57373" stroke-width="1.5"/><circle cx="229.2" cy="128.6" r="1.1" fill="#5c6164"/><path d="M263,117.6 L271.4,126 L263,134.4 L254.6,126Z" fill="#ffca28"/><g stroke="#aed581" fill="none" stroke-width="1.5"><path d="M288.3,122 v-3.8 h3.8 M300.6,118.2 h3.8 v3.8 M304.4,130 v3.8 h-3.8 M292.1,133.8 h-3.8 v-3.8"/><path d="M296.3,120 l5,2.9 v5.8 l-5,2.9 l-5,-2.9 v-5.8z M291.3,122.9 l5,2.9 l5,-2.9 M296.3,125.8 v5.8"/></g><path d="M326.800,120.600 c1.600,-0.700 2.600,-0.200 3.300,1.600 l4.200,9.400 c0.400,0.900 1,1.100 1.900,0.700 M331.300,125.800 l-4.300,6.900" fill="none" stroke="#ff5370" stroke-width="1.900"/><circle cx="356.05" cy="125.9" r="1.95" fill="#40a9e0"/><circle cx="361.15000000000003" cy="125.9" r="1.95" fill="#40a9e0"/><circle cx="366.25" cy="125.9" r="1.95" fill="#40a9e0"/><g fill="none" stroke="#4db6ac" stroke-width="1.6"><rect x="7" y="135" width="14.4" height="9.6" rx="1"/><path d="M4.3,147.6 h19.5" stroke-width="2"/></g><g stroke="#ffca28" fill="none" stroke-width="1.6"><circle cx="14.4" cy="237.3" r="2.6"/><path d="M14.4,231.3 v3.4 M14.4,239.9 v3.4"/></g><circle cx="14.3" cy="365.3" r="7.2" fill="#d0d0d0"/><path d="M11.6,372 v-3 c-2.4,0.6 -2.8,-1.4 -3.6,-1.8 M11.6,369 c-1,-1.6 -0.8,-3 0.2,-4 c-0.4,-1 -0.2,-2 0.2,-2.6 c1,0 1.8,0.6 2.4,1 c0.6,-0.2 1.6,-0.2 2.4,0 c0.6,-0.4 1.4,-1 2.4,-1 c0.4,0.6 0.6,1.6 0.2,2.6 c1,1 1.2,2.4 0.2,4 v3" fill="#3c3f41" stroke="#3c3f41" stroke-width="0.8"/><g fill="#f9a825"><ellipse cx="2415.3" cy="90.6" rx="6" ry="2.4"/><path d="M2409.3,92.3 a6,2.4 0 0 0 12,0 v2.2 a6,2.4 0 0 1 -12,0z"/><path d="M2409.3,96 a6,2.4 0 0 0 12,0 v2 a6,2.4 0 0 1 -12,0z"/></g><path d="M2410.4,189 L2415,200.5 L2420.6,189.5" fill="none" stroke="#ff4081" stroke-width="2.4" stroke-linejoin="miter"/><g fill="#ffca28"><rect x="7.300" y="900" width="13.500" height="5.400"/><rect x="7.300" y="906.600" width="13.500" height="5.400"/></g><rect x="9.400" y="901.900" width="1.800" height="1.800" fill="#2d2f30"/><rect x="9.400" y="908.500" width="1.800" height="1.800" fill="#2d2f30"/><rect x="13.600" y="900" width="0.800" height="12" fill="#2d2f30" opacity="0.5"/><path d="M14.2,1000.4 l1.8,3.9 l4.2,0.5 l-3.1,2.9 l0.8,4.2 l-3.7,-2.1 l-3.7,2.1 l0.8,-4.2 l-3.1,-2.9 l4.2,-0.5z" fill="#ffca28"/><path d="M468.5,182.0 h12 v8.8 l-6,7 l-6,-7z" fill="#313335" stroke="#606366" stroke-width="1"/><path d="M471.7,187.0 h5.6" stroke="#606366" stroke-width="1"/><path d="M468.5,492.0 h12 v8.8 l-6,7 l-6,-7z" fill="#313335" stroke="#606366" stroke-width="1"/><path d="M471.7,497.0 h5.6" stroke="#606366" stroke-width="1"/><path d="M468.5,678.0 h12 v8.8 l-6,7 l-6,-7z" fill="#313335" stroke="#606366" stroke-width="1"/><path d="M471.7,683.0 h5.6" stroke="#606366" stroke-width="1"/><path d="M468.5,709.0 h12 v8.8 l-6,7 l-6,-7z" fill="#313335" stroke="#606366" stroke-width="1"/><path d="M471.7,714.0 h5.6" stroke="#606366" stroke-width="1"/><path d="M468.5,256.0 h12 v-8.8 l-6,-7 l-6,7z" fill="#313335" stroke="#606366" stroke-width="1"/><path d="M471.7,251.0 h5.6" stroke="#606366" stroke-width="1"/><path d="M468.5,380.0 h12 v-8.8 l-6,-7 l-6,7z" fill="#313335" stroke="#606366" stroke-width="1"/><path d="M471.7,375.0 h5.6" stroke="#606366" stroke-width="1"/><path d="M468.5,597.0 h12 v-8.8 l-6,-7 l-6,7z" fill="#313335" stroke="#606366" stroke-width="1"/><path d="M471.7,592.0 h5.6" stroke="#606366" stroke-width="1"/><circle cx="445.8" cy="559.8" r="8.4" fill="#b9e07a"/><path d="M441.6,559.8 l3,3 l5.4,-5.6" fill="none" stroke="#30363a" stroke-width="1.8"/><g fill="#ffeb3b"><path d="M499,590.2 a4.8,4.8 0 0 1 2.6,8.8 v1.6 h-5.2 v-1.6 a4.8,4.8 0 0 1 2.6,-8.800z"/><rect x="496.6" y="601.4" width="4.8" height="1.4"/><rect x="497.4" y="603.4" width="3.2" height="1.3"/></g><g stroke="#ffeb3b" stroke-width="1.5"><path d="M499,586.6 v1.8 M492.8,589 l1.4,1.4 M505.2,589 l-1.4,1.4 M490,595 h1.8 M506.2,595 h1.8"/></g><rect x="379.5" y="511.5" width="2002.5" height="124.5" rx="1" fill="none" stroke="#ed1c24" stroke-width="6"/><g fill="none" stroke="#e8e8e8" stroke-width="1.6"><circle cx="2307.2" cy="761" r="7.4"/><circle cx="2307.2" cy="761" r="3.6"/></g><circle cx="2351" cy="755.9" r="1.950" fill="#ececec"/><circle cx="2351" cy="761" r="1.950" fill="#ececec"/><circle cx="2351" cy="766.1" r="1.950" fill="#ececec"/><rect x="2378" y="759" width="14.500" height="4" fill="#f0f0f0"/><path d="M40.2,797.8 a6.4,6.4 0 1 0 6.2,-6.6" fill="none" stroke="#4db6ac" stroke-width="1.8"/><path d="M47.4,787.6 v7.2 l-4.6,-3.6z" fill="#4db6ac"/><g transform="translate(47.5,832.6) scale(0.95)" fill="#ff5370" stroke="#ff5370"><path d="M-5,-2.400 a5,4.200 0 0 1 10,0 v4.400 a5,5.400 0 0 1 -10,0z" stroke="none"/><path d="M-3,-5.800 a3,2.400 0 0 1 6,0z" stroke="none"/><path d="M-7,-2.600 h3 M-7,1 h3 M-7,4.600 h3 M4,-2.600 h3 M4,1 h3 M4,4.600 h3" stroke-width="1.700" fill="none"/><path d="M-4.400,-8.300 l2,2.200 M4.400,-8.300 l-2,2.200" stroke-width="1.500" fill="none"/><path d="M-2.400,-0.600 h4.800 M-2.400,2.800 h4.800" stroke="#3c3f41" stroke-width="1.400"/></g><circle cx="51.6" cy="837.8" r="3.8" fill="#3c3f41"/><path d="M49,838.5 a2.8,2.8 0 1 0 2.4,-3.4" fill="none" stroke="#66bb6a" stroke-width="1.3"/><rect x="40" y="859.4" width="14" height="13.6" fill="#ff5370"/><g fill="#66bb6a"><path d="M43.2,896.6 l5.4,3 v6 l-5.4,3 l-5.4,-3 v-6z"/></g><path d="M49.5,898 L55.4,892.2 M51,891.8 h4.8 v4.8" fill="none" stroke="#66bb6a" stroke-width="1.5"/><path d="M37.8,899.6 l5.4,3 l5.4,-3 M43.2,902.6 v6" stroke="#3c3f41" stroke-width="0.8" fill="none"/><g fill="#7cb342"><rect x="38.6" y="925.4" width="7" height="7"/><rect x="38.6" y="935" width="7" height="7"/><rect x="48" y="935" width="7" height="7"/><path d="M51.5,924 l4.6,4.6 l-4.6,4.6 l-4.600,-4.600z"/></g><circle cx="46.8" cy="968" r="5.28" fill="#c792ea"/><rect x="45.02" y="960.61" width="3.56" height="3.30" fill="#c792ea" transform="rotate(0 46.8 968)"/><rect x="45.02" y="960.61" width="3.56" height="3.30" fill="#c792ea" transform="rotate(45 46.8 968)"/><rect x="45.02" y="960.61" width="3.56" height="3.30" fill="#c792ea" transform="rotate(90 46.8 968)"/><rect x="45.02" y="960.61" width="3.56" height="3.30" fill="#c792ea" transform="rotate(135 46.8 968)"/><rect x="45.02" y="960.61" width="3.56" height="3.30" fill="#c792ea" transform="rotate(180 46.8 968)"/><rect x="45.02" y="960.61" width="3.56" height="3.30" fill="#c792ea" transform="rotate(225 46.8 968)"/><rect x="45.02" y="960.61" width="3.56" height="3.30" fill="#c792ea" transform="rotate(270 46.8 968)"/><rect x="45.02" y="960.61" width="3.56" height="3.30" fill="#c792ea" transform="rotate(315 46.8 968)"/><circle cx="46.8" cy="968" r="2.5" fill="#3c3f41"/><circle cx="41.8" cy="1013" r="1.8" fill="#40a9e0"/><circle cx="47.0" cy="1013" r="1.8" fill="#40a9e0"/><circle cx="52.199999999999996" cy="1013" r="1.8" fill="#40a9e0"/><g stroke="#f8bbd0" stroke-width="1.5" fill="none"><path d="M84.7,793 L90.7,787 M85.7,786.8 h5.2 v5.2"/><path d="M82.2,795.5 L76.2,801.5 M76.0,796.5 v5.2 h5.2"/></g><g stroke="#f8bbd0" stroke-width="1.5" fill="none"><path d="M125,786.5 L119,792.5 M118.8,787.5 v5.2 h5.2"/><path d="M109.5,802 L115.5,796 M110.5,795.8 h5.2 v5.2"/></g><g fill="#c792ea"><rect x="153" y="786.4" width="7" height="7"/><rect x="162" y="786.4" width="7" height="7"/><rect x="153" y="795.2" width="7" height="7"/><rect x="162" y="795.2" width="5" height="5"/></g><path d="M165.8,800.4 L171.6,800.4 L168.7,803.4Z" fill="#b0b0b0"/><path d="M188.2,786.6 h13.8 l-5.2,7 v7.4 l-3.4,-1.600 v-5.800z" fill="#42a5f5"/><path d="M200,800.4 L205.8,800.4 L202.9,803.4Z" fill="#b0b0b0"/><g fill="none" stroke="#78909c" stroke-width="1.5"><rect x="220.5" y="787.2" width="17.2" height="14.2" rx="1.2"/><path d="M225.6,794.8 h6.4 M228.8,791.6 v6.4"/></g><rect x="230" y="787.2" width="7.600" height="3.2" fill="#78909c"/><path d="M266.4,794.4 h13 M272.9,788 v12.800" stroke="#00acc1" stroke-width="2"/><path d="M278.2,800.4 L284,800.4 L281.1,803.4Z" fill="#b0b0b0"/><path d="M74.1,822.2 l5.400,5.400 l5.400,-5.400" fill="none" stroke="#afb1b3" stroke-width="1.6"/><path d="M97.1,847.2 l5.400,5.400 l5.400,-5.400" fill="none" stroke="#afb1b3" stroke-width="1.6"/><path d="M120.19999999999999,872.4000000000001 l5.400,5.400 l5.400,-5.400" fill="none" stroke="#d0d0d0" stroke-width="1.6"/><g transform="translate(96.8,817.4) scale(1.0)"><path d="M6.2,4.200 C3.600,3.800 1.800,5.200 2.600,8.800" fill="none" stroke="#26282a" stroke-width="1"/><path d="M-0.100,12.900 C1.400,10.400 2.600,9 4.100,8.100 C5.800,7 7.200,6.200 8.800,5.700 L11.200,8 C12.600,9.400 14.200,10.200 15.400,11.600 L12.600,11.300 C10.800,10.400 9,10 7.400,9.900 C6,9.800 5,9.900 4.100,10.300 C3,11 2.200,12.200 1.300,13.200 Z" fill="#e2a91f"/><path d="M9,1.300 L10.900,2.700 L14.800,2.700 L16.500,1.200 L16.300,5.200 L14.100,8.800 L12.200,8.800 L9.900,5.300Z" fill="#f2dc86"/><path d="M9,1.300 l1.300,1.100 l-1,0.600z M16.500,1.200 l-1.300,1.100 l1.100,0.700z" fill="#1e1e1e"/><circle cx="10" cy="7.100" r="0.800" fill="#111"/><circle cx="15.700" cy="7.100" r="0.800" fill="#111"/><path d="M5.200,10.300 l1.600,1 l1.400,-0.400" fill="none" stroke="#1e1e1e" stroke-width="0.900"/><path d="M11.800,4.600 h0.900 M13.600,4.600 h0.900 M12.500,6.600 h1.400" stroke="#b99b4a" stroke-width="0.700"/></g><g transform="translate(143.2,867.4) scale(1.0)"><path d="M6.2,4.200 C3.600,3.800 1.800,5.200 2.600,8.800" fill="none" stroke="#26282a" stroke-width="1"/><path d="M-0.100,12.900 C1.400,10.400 2.600,9 4.100,8.100 C5.800,7 7.200,6.200 8.800,5.700 L11.200,8 C12.600,9.400 14.200,10.200 15.400,11.600 L12.600,11.300 C10.800,10.400 9,10 7.400,9.900 C6,9.800 5,9.900 4.100,10.300 C3,11 2.200,12.200 1.300,13.200 Z" fill="#e2a91f"/><path d="M9,1.300 L10.900,2.700 L14.800,2.700 L16.500,1.200 L16.300,5.200 L14.100,8.800 L12.200,8.800 L9.900,5.300Z" fill="#f2dc86"/><path d="M9,1.300 l1.300,1.100 l-1,0.600z M16.500,1.200 l-1.300,1.100 l1.100,0.700z" fill="#1e1e1e"/><circle cx="10" cy="7.100" r="0.800" fill="#111"/><circle cx="15.700" cy="7.100" r="0.800" fill="#111"/><path d="M5.200,10.300 l1.600,1 l1.400,-0.400" fill="none" stroke="#1e1e1e" stroke-width="0.900"/><path d="M11.800,4.600 h0.900 M13.600,4.600 h0.900 M12.500,6.600 h1.400" stroke="#b99b4a" stroke-width="0.700"/></g><path d="M152.500,877.500 l6,3.800 l-6,3.800z" fill="#c3e88d"/><path d="M122.800,843 L135.400,850.500 L122.800,858Z" fill="#c3e88d"/><circle cx="174.900" cy="899.700" r="8.200" fill="#64b5f6"/><path d="M169.500,895 c2,0 3,1 3,2.400 c0,1.400 1.600,1.200 1.600,2.800 c0,1.600 -1.400,2.200 -1.400,4 c-2.600,-1 -4.600,-3.600 -4.600,-6.600 c0,-1 0.600,-2 1.400,-2.600z M176,892 c3,0.400 5.600,2.600 6.400,5.600 c-1,0.800 -1.600,0 -2.600,0.600 c-1,0.600 0,2 -1.400,2.400 c-1.400,0.400 -1.400,-1.400 -2.600,-2 c-1.200,-0.600 -0.400,-2 0.200,-2.800 c0.600,-0.800 -0.600,-2 0,-3.800z" fill="#3c3f41"/><path d="M190,907.200 a8,8 0 0 1 8.600,-14.400" fill="none" stroke="#a0a4a6" stroke-width="1.400"/><rect x="946.8" y="790.3" width="15.400" height="13.400" rx="1.200" fill="none" stroke="#ce93d8" stroke-width="1.600"/><rect x="946.8" y="790.3" width="15.400" height="2.600" fill="#ce93d8"/><path d="M950,794.9 l3,2.700 l-3,2.700 M954.6,800.7 h4" fill="none" stroke="#ce93d8" stroke-width="1.400"/><rect x="1132.0" y="790.3" width="15.400" height="13.400" rx="1.200" fill="none" stroke="#ce93d8" stroke-width="1.600"/><rect x="1132.0" y="790.3" width="15.400" height="2.600" fill="#ce93d8"/><path d="M1135.2,794.9 l3,2.700 l-3,2.700 M1139.8,800.7 h4" fill="none" stroke="#ce93d8" stroke-width="1.400"/><g fill="none" stroke="#e57373" stroke-width="1.500"><rect x="1304.400" y="790" width="10.400" height="10.400" rx="1"/></g><g fill="#e57373"><rect x="1298.800" y="791" width="2" height="2"/><rect x="1298.800" y="795" width="2" height="2"/><rect x="1298.800" y="799" width="2" height="2"/><rect x="1299.500" y="803" width="2" height="1.600"/><rect x="1303" y="803" width="2" height="1.600"/><rect x="1306.500" y="803" width="2" height="1.600"/><rect x="1310" y="803" width="2" height="1.600"/></g><path d="M1343.200,799 a8,8 0 0 1 14.400,-1.600" fill="none" stroke="#c792ea" stroke-width="1.800"/><path d="M1360.400,793.400 l-0.800,6.400 l-6,-2.400z" fill="#c792ea"/><circle cx="1351.400" cy="801.400" r="1.900" fill="#c792ea"/><path d="M1384.8,788.5 v11.0 M1379.2,794 l5.600,5.800 l5.600,-5.800" fill="none" stroke="#ffca28" stroke-width="1.800"/><circle cx="1384.8" cy="803.8" r="1.700" fill="#ffca28"/><path d="M1418.7,788.5 v11.0 M1413.1000000000001,794 l5.600,5.800 l5.600,-5.800" fill="none" stroke="#448aff" stroke-width="1.800"/><circle cx="1418.7" cy="803.8" r="1.700" fill="#448aff"/><path d="M1452.7,800 v-11.0 M1447.1000000000001,794.5 l5.600,-5.800 l5.600,5.800" fill="none" stroke="#ffca28" stroke-width="1.800"/><circle cx="1452.7" cy="803.8" r="1.700" fill="#ffca28"/><rect x="1479" y="789" width="15.600" height="15.600" rx="2" fill="#ec407a"/><path d="M1486.800,791.600 l3.200,3.200 h-1.900 v2.400 h-2.600 v-2.400 h-1.900z" fill="#3c3f41"/><path d="M1480.400,799.200 h3.600 a2.800,2.600 0 0 0 5.600,0 h3.600" fill="none" stroke="#3c3f41" stroke-width="1.200"/><g fill="#66bb6a"><path d="M1513.200,790.400 l6,6.200 l-6,6.200z"/><path d="M1519.200,790.400 l6,6.200 l-6,6.200z"/><rect x="1526.400" y="790.400" width="1.800" height="12.400"/></g><rect x="1557.3" y="790.3" width="15.400" height="13.400" rx="1.200" fill="none" stroke="#ce93d8" stroke-width="1.600"/><rect x="1557.3" y="790.3" width="15.400" height="2.600" fill="#ce93d8"/><path d="M1560.5,794.9 l3,2.700 l-3,2.700 M1565.1,800.7 h4" fill="none" stroke="#ce93d8" stroke-width="1.400"/><g fill="#6d7072"><circle cx="1592.800" cy="792.500" r="2.800"/><circle cx="1592.800" cy="801.500" r="2.800"/><rect x="1598" y="791.500" width="10" height="1.800"/><rect x="1598" y="796.200" width="10" height="1.800"/><rect x="1598" y="800.800" width="10" height="1.800"/></g><g fill="#7986cb"><rect x="2381" y="791" width="4" height="11.400"/><rect x="2386" y="791" width="10.400" height="3.400"/><rect x="2386" y="795.400" width="4.600" height="7"/><rect x="2391.600" y="795.400" width="4.800" height="7"/></g><path d="M2394.5,804.5 L2400,804.5 L2397.25,807.5Z" fill="#b0b0b0"/><path d="M779.600,871 l3.400,3.600 l7.400,-8" fill="none" stroke="#ff7043" stroke-width="1.600"/><path d="M1392.8,877.5 v-12.0 M1387.2,871 l5.600,-5.800 l5.600,5.800" fill="none" stroke="#5f6366" stroke-width="1.800"/><path d="M1426.7,865 v12.0 M1421.1000000000001,871.5 l5.600,5.800 l5.600,-5.800" fill="none" stroke="#4db6ac" stroke-width="1.800"/><path d="M1453.800,863.600 h14 l-5.200,7 v7.400 l-3.600,-1.600 v-5.800z" fill="#42a5f5"/><path d="M1489.5,868.2 L1501.1,868.2 L1495.3,874.2Z" fill="#9da0a2"/><path d="M1523,868.600 h12.600 M1529.300,862.300 v12.600" stroke="#00acc1" stroke-width="2"/><rect x="1523" y="902.600" width="12.600" height="1.600" fill="#55585a"/><path d="M1529.3,944.5 v-12.600000000000023 M1523.7,937.4 l5.600,-5.800 l5.600,5.800" fill="none" stroke="#55585a" stroke-width="1.800"/><path d="M1529.3,964.4 v12.100000000000023 M1523.7,971 l5.600,5.800 l5.600,-5.800" fill="none" stroke="#55585a" stroke-width="1.800"/><circle cx="1524.1999999999998" cy="1015.8" r="1.6" fill="#40a9e0"/><circle cx="1529.6" cy="1015.8" r="1.6" fill="#40a9e0"/><circle cx="1534.9999999999998" cy="1015.8" r="1.6" fill="#40a9e0"/><circle cx="1524.6" cy="1015.8" r="1.6" fill="#40a9e0"/><circle cx="1530.0" cy="1015.8" r="1.6" fill="#40a9e0"/><circle cx="1535.3999999999999" cy="1015.8" r="1.6" fill="#40a9e0"/><path d="M1555.7,858.8000000000001 l5.400,5.400 l-5.400,5.400" fill="none" stroke="#c8c8c8" stroke-width="1.6"/><path d="M1555.7,883.8000000000001 l5.400,5.400 l-5.400,5.400" fill="none" stroke="#c8c8c8" stroke-width="1.6"/><path d="M1555.7,933.8000000000001 l5.400,5.400 l-5.400,5.400" fill="none" stroke="#c8c8c8" stroke-width="1.6"/><path d="M1555.7,958.8000000000001 l5.400,5.400 l-5.400,5.400" fill="none" stroke="#c8c8c8" stroke-width="1.6"/><g fill="none" stroke="#c0806a" stroke-width="1.400"><path d="M1579.5,857.0 c-2.600,0 -2.600,0.800 -2.600,3 c0,2.600 -0.400,3.800 -2,4.200 c1.600,0.400 2,1.600 2,4.200 c0,2.200 0,3 2.600,3"/><path d="M1589.5,857.0 c2.600,0 2.600,0.800 2.600,3 c0,2.600 0.400,3.800 2,4.200 c-1.600,0.400 -2,1.600 -2,4.200 c0,2.200 0,3 -2.600,3"/></g><g fill="#c0806a"><circle cx="1581.3" cy="867.6" r="0.900"/><circle cx="1584.5" cy="867.6" r="0.900"/><circle cx="1587.7" cy="867.6" r="0.900"/></g><g fill="none" stroke="#c0806a" stroke-width="1.400"><path d="M1579.5,932.0 c-2.600,0 -2.600,0.800 -2.600,3 c0,2.600 -0.400,3.800 -2,4.200 c1.600,0.400 2,1.600 2,4.200 c0,2.200 0,3 2.600,3"/><path d="M1589.5,932.0 c2.600,0 2.600,0.800 2.600,3 c0,2.600 0.400,3.800 2,4.200 c-1.600,0.400 -2,1.600 -2,4.200 c0,2.200 0,3 -2.600,3"/></g><g fill="#c0806a"><circle cx="1581.3" cy="942.6" r="0.900"/><circle cx="1584.5" cy="942.6" r="0.900"/><circle cx="1587.7" cy="942.6" r="0.900"/></g><g stroke="#ff8a65" stroke-width="1.700" fill="none"><path d="M1577,883.8000000000001 h7 M1588.200,883.8000000000001 h5 M1577,889.2 h3.400 M1584.600,889.2 h8.600 M1577,894.6 h9 M1590.200,894.6 h3"/><path d="M1586,881.2 v5.200 M1582.400,886.6 v5.200 M1588.200,892.0 v5.200"/></g><rect x="1577.600" y="906.400" width="15.400" height="15.400" rx="1.500" fill="#4dd0e1"/><g fill="#43a047"><path d="M1574.800,960.800 h8.600 v4.200 a4.300,4.300 0 0 1 -8.600,0z"/><path d="M1585.600,960.800 h8.600 v4.200 a4.300,4.300 0 0 1 -8.600,0z"/><rect x="1582" y="961.400" width="5" height="1.800"/></g><g transform="translate(38.2,1034.2) scale(0.92)" fill="none" stroke="#42a5f5" stroke-width="1.500"><circle cx="2.600" cy="2.400" r="1.700"/><circle cx="10.700" cy="2.400" r="1.700"/><circle cx="2.600" cy="10.800" r="1.700"/><path d="M2.600,4.200 v4.800 M10.700,4.200 c0,3.200 -8.100,2 -8.100,5"/></g><path d="M100,1034.500 h6.600 l3.600,3.600 v9.400 h-10.200z" fill="#e0e0e0"/><circle cx="104.600" cy="1041.600" r="2.500" fill="none" stroke="#3c3f41" stroke-width="1.300"/><path d="M106.400,1043.400 l2.600,2.600" stroke="#3c3f41" stroke-width="1.300"/><rect x="168" y="1035" width="11.600" height="11.600" rx="1" fill="none" stroke="#c27c68" stroke-width="1.500"/><path d="M170.800,1038 h6 v3 l-1.500,-1 l-1.500,1 l-1.500,-1 l-1.500,1z M170.800,1043.500 h6" stroke="#c27c68" stroke-width="1.100" fill="none"/><circle cx="258.200" cy="1040.600" r="6.400" fill="#d8d8d8"/><rect x="257.300" y="1036.600" width="1.800" height="5" fill="#3c3f41"/><rect x="257.300" y="1042.800" width="1.800" height="1.800" fill="#3c3f41"/><path d="M357.500,1034.400 a6.400,6.400 0 1 0 6.400,6.400" fill="none" stroke="#b0b0b0" stroke-width="1.500"/><path d="M357.500,1036.800 v4.200 l2.200,1.400" fill="none" stroke="#b0b0b0" stroke-width="1.300"/><path d="M360.600,1040.800 l6,3.600 l-6,3.600z" fill="#b0b0b0"/><path d="M359.600,1034.400 a6.400,6.400 0 0 1 4.600,4.200" fill="none" stroke="#b0b0b0" stroke-width="1.500"/><rect x="439.600" y="1034.600" width="14" height="11.600" rx="1" fill="#b9689f"/><path d="M442,1037.600 l2.600,2.400 l-2.600,2.400 M446.400,1043 h3.600" fill="none" stroke="#3c3f41" stroke-width="1.200"/><g stroke="#26a69a" stroke-width="1.500" fill="#26a69a"><path d="M544.500,1036.500 L539.500,1046 M544.500,1036.500 L549.800,1046" fill="none"/><circle cx="544.500" cy="1036.300" r="2.200"/><circle cx="539.400" cy="1046" r="2.200"/><circle cx="549.800" cy="1046" r="2.200"/></g><path d="M643.200,1036.600 a2,2 0 0 1 2,-2 h9 a2,2 0 0 1 2,2 v10 h-13z" fill="#c48b7f"/><rect x="645.600" y="1042.400" width="4.400" height="2" fill="#3c3f41"/><g fill="#d0d0d0"><path d="M724.9000000000001,1033.6 l6.700,4.600 l-6.700,4.600 l-6.700,-4.600z"/><path d="M718.2,1041.8 l1.700,-1.100 l5,3.400 l5,-3.400 l1.700,1.100 l-6.700,4.600z"/></g><circle cx="858.6" cy="1040.8" r="4.64" fill="#7cb342"/><rect x="857.03" y="1034.30" width="3.13" height="2.90" fill="#7cb342" transform="rotate(0 858.6 1040.8)"/><rect x="857.03" y="1034.30" width="3.13" height="2.90" fill="#7cb342" transform="rotate(45 858.6 1040.8)"/><rect x="857.03" y="1034.30" width="3.13" height="2.90" fill="#7cb342" transform="rotate(90 858.6 1040.8)"/><rect x="857.03" y="1034.30" width="3.13" height="2.90" fill="#7cb342" transform="rotate(135 858.6 1040.8)"/><rect x="857.03" y="1034.30" width="3.13" height="2.90" fill="#7cb342" transform="rotate(180 858.6 1040.8)"/><rect x="857.03" y="1034.30" width="3.13" height="2.90" fill="#7cb342" transform="rotate(225 858.6 1040.8)"/><rect x="857.03" y="1034.30" width="3.13" height="2.90" fill="#7cb342" transform="rotate(270 858.6 1040.8)"/><rect x="857.03" y="1034.30" width="3.13" height="2.90" fill="#7cb342" transform="rotate(315 858.6 1040.8)"/><circle cx="858.6" cy="1040.8" r="2.2" fill="#2d2f30"/><circle cx="863.800" cy="1046" r="2.400" fill="#00e000"/><path d="M2316.100,1034.400 a7,7 0 0 1 7,7 v7 h-7 a7,7 0 0 1 0,-14z" fill="none" stroke="#bdbdbd" stroke-width="1.600"/><g fill="#e8e8e8"><path d="M14.0,1060.3999999999999 l6.700,4.600 l-6.700,4.600 l-6.700,-4.600z"/><path d="M7.3,1068.6 l1.700,-1.100 l5,3.400 l5,-3.400 l1.700,1.100 l-6.700,4.600z"/></g><g transform="translate(2359.4,1062.6) scale(1.0)" fill="none" stroke="#4fc3f7" stroke-width="1.500"><circle cx="2.600" cy="2.400" r="1.700"/><circle cx="10.700" cy="2.400" r="1.700"/><circle cx="2.600" cy="10.800" r="1.700"/><path d="M2.600,4.200 v4.800 M10.700,4.200 c0,3.200 -8.100,2 -8.100,5"/></g></svg>
<span class="t" id="t0" style="left:43.80px;top:10.00px;font-size:17px;line-height:17px;color:#bbbbbb;font-family:'Liberation Sans',sans-serif;letter-spacing:-0.127px;">File</span>
<span class="t" id="t1" style="left:84.30px;top:10.00px;font-size:17px;line-height:17px;color:#bbbbbb;font-family:'Liberation Sans',sans-serif;letter-spacing:0.176px;">Edit</span>
<span class="t" id="t2" style="left:127.30px;top:10.00px;font-size:17px;line-height:17px;color:#bbbbbb;font-family:'Liberation Sans',sans-serif;letter-spacing:0.363px;">View</span>
<span class="t" id="t3" style="left:178.30px;top:10.00px;font-size:17px;line-height:17px;color:#bbbbbb;font-family:'Liberation Sans',sans-serif;letter-spacing:0.249px;">Navigate</span>
<span class="t" id="t4" style="left:261.30px;top:10.00px;font-size:17px;line-height:17px;color:#bbbbbb;font-family:'Liberation Sans',sans-serif;letter-spacing:0.190px;">Code</span>
<span class="t" id="t5" style="left:316.30px;top:10.00px;font-size:17px;line-height:17px;color:#bbbbbb;font-family:'Liberation Sans',sans-serif;letter-spacing:0.144px;">Refactor</span>
<span class="t" id="t6" style="left:395.30px;top:10.00px;font-size:17px;line-height:17px;color:#bbbbbb;font-family:'Liberation Sans',sans-serif;letter-spacing:0.238px;">Build</span>
<span class="t" id="t7" style="left:448.30px;top:10.00px;font-size:17px;line-height:17px;color:#bbbbbb;font-family:'Liberation Sans',sans-serif;letter-spacing:-0.062px;">Run</span>
<span class="t" id="t8" style="left:493.30px;top:10.00px;font-size:17px;line-height:17px;color:#bbbbbb;font-family:'Liberation Sans',sans-serif;letter-spacing:0.342px;">Tools</span>
<span class="t" id="t9" style="left:548.30px;top:10.00px;font-size:17px;line-height:17px;color:#bbbbbb;font-family:'Liberation Sans',sans-serif;letter-spacing:0.422px;">Git</span>
<span class="t" id="t10" style="left:585.30px;top:10.00px;font-size:17px;line-height:17px;color:#bbbbbb;font-family:'Liberation Sans',sans-serif;letter-spacing:0.655px;">Window</span>
<span class="t" id="t11" style="left:662.30px;top:10.00px;font-size:17px;line-height:17px;color:#bbbbbb;font-family:'Liberation Sans',sans-serif;letter-spacing:0.233px;">Help</span>
<span class="t" id="t12" style="left:736.30px;top:9.00px;font-size:17px;line-height:17px;color:#8f9193;font-family:'Liberation Sans',sans-serif;letter-spacing:0.134px;">TomcatShell - ContextConfig.class [C:\Program Files\Apache Software Foundation\Tomcat 8.5\lib\catalina.jar]</span>
<span class="t" id="t13" style="left:15.60px;top:47.00px;font-size:17px;line-height:17px;color:#bbbbbb;font-family:'Liberation Sans',sans-serif;letter-spacing:0.006px;font-weight:bold;">catalina.jar</span>
<span class="t" id="t14" style="left:124.70px;top:47.00px;font-size:17px;line-height:17px;color:#bbbbbb;font-family:'Liberation Sans',sans-serif;letter-spacing:0.674px;">org</span>
<span class="t" id="t15" style="left:171.90px;top:47.00px;font-size:17px;line-height:17px;color:#bbbbbb;font-family:'Liberation Sans',sans-serif;letter-spacing:-0.014px;">apache</span>
<span class="t" id="t16" style="left:247.80px;top:47.00px;font-size:17px;line-height:17px;color:#bbbbbb;font-family:'Liberation Sans',sans-serif;letter-spacing:0.074px;">catalina</span>
<span class="t" id="t17" style="left:327.90px;top:47.00px;font-size:17px;line-height:17px;color:#bbbbbb;font-family:'Liberation Sans',sans-serif;letter-spacing:0.359px;">startup</span>
<span class="t" id="t18" style="left:422.80px;top:47.00px;font-size:17px;line-height:17px;color:#bbbbbb;font-family:'Liberation Sans',sans-serif;letter-spacing:0.259px;">ContextConfig</span>
<span class="t" id="t19" style="left:574.60px;top:47.00px;font-size:17px;line-height:17px;color:#bbbbbb;font-family:'Liberation Sans',sans-serif;letter-spacing:0.342px;">configureContext</span>
<span class="t" id="t20" style="left:1766.20px;top:47.00px;font-size:17px;line-height:17px;color:#bbbbbb;font-family:'Liberation Sans',sans-serif;letter-spacing:-0.183px;">Tomcat 8.5.81</span>
<span class="t" id="t21" style="left:2112.10px;top:47.00px;font-size:17px;line-height:17px;color:#bbbbbb;font-family:'Liberation Sans',sans-serif;letter-spacing:-0.038px;">Git:</span>
<span class="t" id="t22" style="left:35.70px;top:82.00px;font-size:17px;line-height:17px;color:#bbbbbb;font-family:'Liberation Sans',sans-serif;letter-spacing:0.191px;">Structure</span>
<span class="t" id="t23" style="left:406.90px;top:83.00px;font-size:17px;line-height:17px;color:#6c9dc6;font-family:'Liberation Sans',sans-serif;letter-spacing:-0.200px;">ServletTest.java</span>
<span class="t" id="t24" style="left:580.30px;top:83.00px;font-size:17px;line-height:17px;color:#bbbbbb;font-family:'Liberation Sans',sans-serif;letter-spacing:-0.015px;">ContextConfig.class</span>
<span class="t" id="t25" style="left:388.30px;top:117.00px;font-size:17px;line-height:17px;color:#bbbbbb;font-family:'Liberation Sans',sans-serif;letter-spacing:-0.148px;">Decompiled .class file, bytecode version: 51.0 (Java 7)</span>
<span class="t" id="t26" style="left:2247.60px;top:117.00px;font-size:17px;line-height:17px;color:#589df6;font-family:'Liberation Sans',sans-serif;letter-spacing:-0.374px;">Choose Sources...</span>
<span class="t" id="t27" style="left:2275.70px;top:152.00px;font-size:17px;line-height:17px;color:#bbbbbb;font-family:'Liberation Sans',sans-serif;letter-spacing:0.071px;">Reader Mode</span>
<span class="t" id="t28" style="left:125.60px;top:149.00px;font-size:17px;line-height:17px;color:#bbbbbb;font-family:'Liberation Sans',sans-serif;letter-spacing:-0.210px;max-width:249.9px;overflow:hidden;">lifecycleEvent(LifecycleEvent): void</span>
<span class="t" id="t29" style="left:125.60px;top:174.00px;font-size:17px;line-height:17px;color:#bbbbbb;font-family:'Liberation Sans',sans-serif;letter-spacing:0.220px;max-width:249.9px;overflow:hidden;">applicationAnnotationsConfig(): void</span>
<span class="t" id="t30" style="left:125.60px;top:199.00px;font-size:17px;line-height:17px;color:#bbbbbb;font-family:'Liberation Sans',sans-serif;letter-spacing:0.237px;max-width:249.9px;overflow:hidden;">authenticatorConfig(): void</span>
<span class="t" id="t31" style="left:125.60px;top:224.00px;font-size:17px;line-height:17px;color:#bbbbbb;font-family:'Liberation Sans',sans-serif;letter-spacing:-0.030px;max-width:249.9px;overflow:hidden;">createContextDigester(): Digester</span>
<span class="t" id="t32" style="left:125.60px;top:249.00px;font-size:17px;line-height:17px;color:#bbbbbb;font-family:'Liberation Sans',sans-serif;letter-spacing:0.113px;max-width:249.9px;overflow:hidden;">contextConfig(Digester): void</span>
<span class="t" id="t33" style="left:125.60px;top:274.00px;font-size:17px;line-height:17px;color:#bbbbbb;font-family:'Liberation Sans',sans-serif;letter-spacing:0.003px;max-width:249.9px;overflow:hidden;">processContextConfig(Digester, URL): void</span>
<span class="t" id="t34" style="left:125.60px;top:299.00px;font-size:17px;line-height:17px;color:#bbbbbb;font-family:'Liberation Sans',sans-serif;letter-spacing:-0.169px;max-width:249.9px;overflow:hidden;">fixDocBase(): void</span>
<span class="t" id="t35" style="left:125.60px;top:324.00px;font-size:17px;line-height:17px;color:#bbbbbb;font-family:'Liberation Sans',sans-serif;letter-spacing:0.096px;max-width:249.9px;overflow:hidden;">antiLocking(): void</span>
<span class="t" id="t36" style="left:125.60px;top:349.00px;font-size:17px;line-height:17px;color:#bbbbbb;font-family:'Liberation Sans',sans-serif;letter-spacing:0.151px;max-width:249.9px;overflow:hidden;">init(): void</span>
<span class="t" id="t37" style="left:125.60px;top:374.00px;font-size:17px;line-height:17px;color:#bbbbbb;font-family:'Liberation Sans',sans-serif;letter-spacing:0.091px;max-width:249.9px;overflow:hidden;">beforeStart(): void</span>
<span class="t" id="t38" style="left:125.60px;top:399.00px;font-size:17px;line-height:17px;color:#bbbbbb;font-family:'Liberation Sans',sans-serif;letter-spacing:0.137px;max-width:249.9px;overflow:hidden;">configureStart(): void</span>
<span class="t" id="t39" style="left:125.60px;top:424.00px;font-size:17px;line-height:17px;color:#bbbbbb;font-family:'Liberation Sans',sans-serif;letter-spacing:0.144px;max-width:249.9px;overflow:hidden;">configureStop(): void</span>
<span class="t" id="t40" style="left:125.60px;top:449.00px;font-size:17px;line-height:17px;color:#bbbbbb;font-family:'Liberation Sans',sans-serif;letter-spacing:-0.000px;max-width:249.9px;overflow:hidden;">destroy(): void</span>
<span class="t" id="t41" style="left:125.60px;top:474.00px;font-size:17px;line-height:17px;color:#bbbbbb;font-family:'Liberation Sans',sans-serif;letter-spacing:-0.308px;max-width:249.9px;overflow:hidden;">getServer(): Server</span>
<span class="t" id="t42" style="left:125.60px;top:499.00px;font-size:17px;line-height:17px;color:#bbbbbb;font-family:'Liberation Sans',sans-serif;letter-spacing:-0.173px;max-width:249.9px;overflow:hidden;">validateSecurityRoles(): void</span>
<span class="t" id="t43" style="left:125.60px;top:524.00px;font-size:17px;line-height:17px;color:#bbbbbb;font-family:'Liberation Sans',sans-serif;letter-spacing:-0.114px;max-width:249.9px;overflow:hidden;">getHostConfigBase(): File</span>
<span class="t" id="t44" style="left:125.60px;top:549.00px;font-size:17px;line-height:17px;color:#bbbbbb;font-family:'Liberation Sans',sans-serif;letter-spacing:0.154px;max-width:249.9px;overflow:hidden;">webConfig(): void</span>
<span class="t" id="t45" style="left:125.60px;top:574.00px;font-size:17px;line-height:17px;color:#bbbbbb;font-family:'Liberation Sans',sans-serif;letter-spacing:-0.320px;max-width:249.9px;overflow:hidden;">processClasses(WebXml, Set&lt;WebXml&gt;): void</span>
<span class="t" id="t46" style="left:125.60px;top:599.00px;font-size:17px;line-height:17px;color:#d0d0d0;font-family:'Liberation Sans',sans-serif;letter-spacing:0.113px;max-width:249.9px;overflow:hidden;">configureContext(WebXml): void</span>
<span class="t" id="t47" style="left:125.60px;top:624.00px;font-size:17px;line-height:17px;color:#bbbbbb;font-family:'Liberation Sans',sans-serif;letter-spacing:0.199px;max-width:249.9px;overflow:hidden;">getDefaultWebXmlFragment(WebXmlParser): WebXml</span>
<span class="t" id="t48" style="left:125.60px;top:649.00px;font-size:17px;line-height:17px;color:#bbbbbb;font-family:'Liberation Sans',sans-serif;letter-spacing:-0.168px;max-width:249.9px;overflow:hidden;">convertJsps(WebXml): void</span>
<span class="t" id="t49" style="left:125.60px;top:674.00px;font-size:17px;line-height:17px;color:#bbbbbb;font-family:'Liberation Sans',sans-serif;letter-spacing:-0.031px;max-width:249.9px;overflow:hidden;">convertJsp(ServletDef, Map&lt;String, String&gt;): void</span>
<span class="t" id="t50" style="left:125.60px;top:699.00px;font-size:17px;line-height:17px;color:#bbbbbb;font-family:'Liberation Sans',sans-serif;letter-spacing:-0.053px;max-width:249.9px;overflow:hidden;">createWebXml(): WebXml</span>
<span class="t" id="t51" style="left:125.60px;top:724.00px;font-size:17px;line-height:17px;color:#bbbbbb;font-family:'Liberation Sans',sans-serif;letter-spacing:-0.026px;max-width:249.9px;overflow:hidden;">processServletContainerInitializers(): void</span>
<span class="t" id="t52" style="left:18.90px;top:116.00px;font-size:14px;line-height:14px;color:#bbbbbb;font-family:'Liberation Sans',sans-serif;letter-spacing:0.332px;transform-origin:0.7px 12px;transform:rotate(-90deg);">Project</span>
<span class="t" id="t53" style="left:18.90px;top:212.00px;font-size:14px;line-height:14px;color:#bbbbbb;font-family:'Liberation Sans',sans-serif;letter-spacing:0.378px;transform-origin:0.7px 12px;transform:rotate(-90deg);">Commit</span>
<span class="t" id="t54" style="left:18.90px;top:340.00px;font-size:14px;line-height:14px;color:#bbbbbb;font-family:'Liberation Sans',sans-serif;letter-spacing:-0.315px;transform-origin:0.7px 12px;transform:rotate(-90deg);">Pull Requests</span>
<span class="t" id="t55" style="left:18.90px;top:881.00px;font-size:14px;line-height:14px;color:#ffffff;font-family:'Liberation Sans',sans-serif;letter-spacing:0.143px;transform-origin:0.7px 12px;transform:rotate(-90deg);">Structure</span>
<span class="t" id="t56" style="left:18.90px;top:982.00px;font-size:14px;line-height:14px;color:#bbbbbb;font-family:'Liberation Sans',sans-serif;letter-spacing:-0.242px;transform-origin:0.7px 12px;transform:rotate(-90deg);">Favorites</span>
<span class="t" id="t57" style="left:2410.20px;top:95.00px;font-size:14px;line-height:14px;color:#bbbbbb;font-family:'Liberation Sans',sans-serif;letter-spacing:-0.442px;transform-origin:0.7px 12px;transform:rotate(90deg);">Database</span>
<span class="t" id="t58" style="left:2410.20px;top:196.00px;font-size:14px;line-height:14px;color:#bbbbbb;font-family:'Liberation Sans',sans-serif;letter-spacing:-0.066px;transform-origin:0.7px 12px;transform:rotate(90deg);">Maven</span>
<span class="t" id="t59" style="left:35.60px;top:752.00px;font-size:17px;line-height:17px;color:#bbbbbb;font-family:'Liberation Sans',sans-serif;letter-spacing:-0.548px;">Services</span>
<span class="t" id="t60" style="left:120.00px;top:817.00px;font-size:17px;line-height:17px;color:#bbbbbb;font-family:'Liberation Sans',sans-serif;letter-spacing:0.000px;">Tomcat Server</span>
<span class="t" id="t61" style="left:142.90px;top:842.00px;font-size:17px;line-height:17px;color:#bbbbbb;font-family:'Liberation Sans',sans-serif;letter-spacing:0.125px;">Running</span>
<span class="t" id="t62" style="left:165.70px;top:867.00px;font-size:17px;line-height:17px;color:#d4d4d4;font-family:'Liberation Sans',sans-serif;letter-spacing:0.286px;font-weight:bold;">Tomcat 8.5.81</span>
<span class="t" id="t63" style="left:287.30px;top:867.00px;font-size:17px;line-height:17px;color:#8c8c8c;font-family:'Liberation Sans',sans-serif;letter-spacing:0.040px;">[local]</span>
<span class="t" id="t64" style="left:209.10px;top:892.00px;font-size:17px;line-height:17px;color:#bbbbbb;font-family:'Liberation Sans',sans-serif;letter-spacing:0.073px;">TomcatShell:war exploded</span>
<span class="t" id="t65" style="left:783.60px;top:790.00px;font-size:14px;line-height:14px;color:#bbbbbb;font-family:'Liberation Sans',sans-serif;letter-spacing:0.075px;">Debugger</span>
<span class="t" id="t66" style="left:875.30px;top:790.00px;font-size:14px;line-height:14px;color:#bbbbbb;font-family:'Liberation Sans',sans-serif;letter-spacing:-0.122px;">Server</span>
<span class="t" id="t67" style="left:968.40px;top:790.00px;font-size:14px;line-height:14px;color:#bbbbbb;font-family:'Liberation Sans',sans-serif;letter-spacing:0.035px;">Tomcat Localhost Log</span>
<span class="t" id="t68" style="left:1153.60px;top:790.00px;font-size:14px;line-height:14px;color:#bbbbbb;font-family:'Liberation Sans',sans-serif;letter-spacing:-0.044px;">Tomcat Catalina Log</span>
<span class="t" id="t69" style="left:783.60px;top:827.00px;font-size:14px;line-height:14px;color:#bbbbbb;font-family:'Liberation Sans',sans-serif;letter-spacing:-0.442px;">Frames</span>
<span class="t" id="t70" style="left:1529.90px;top:827.00px;font-size:14px;line-height:14px;color:#bbbbbb;font-family:'Liberation Sans',sans-serif;letter-spacing:-0.181px;">Variables</span>
<span class="t" id="t71" style="left:796.00px;top:862.00px;font-size:17px;line-height:17px;color:#bbbbbb;font-family:'Liberation Sans',sans-serif;letter-spacing:-0.024px;">"RMI TCP Connection(3)-127.0.0.1"...45 in group "RMI Runtime": RUNNING</span>
<span class="t" id="t72" style="left:788.70px;top:895.00px;font-size:17px;line-height:17px;color:#d0d0d0;font-family:'Liberation Sans',sans-serif;letter-spacing:0.157px;">configureContext:1338, ContextConfig</span>
<span class="t" id="t73" style="left:1087.20px;top:895.00px;font-size:17px;line-height:17px;color:#d0d0d0;font-family:'Liberation Sans',sans-serif;letter-spacing:0.052px;font-style:italic;">(org.apache.catalina.startup)</span>
<span class="t" id="t74" style="left:788.70px;top:921.00px;font-size:17px;line-height:17px;color:#7d7c75;font-family:'Liberation Sans',sans-serif;letter-spacing:0.216px;">webConfig:1115, ContextConfig</span>
<span class="t" id="t75" style="left:1037.80px;top:921.00px;font-size:17px;line-height:17px;color:#7d7c75;font-family:'Liberation Sans',sans-serif;letter-spacing:0.027px;font-style:italic;">(org.apache.catalina.startup)</span>
<span class="t" id="t76" style="left:788.70px;top:947.00px;font-size:17px;line-height:17px;color:#7d7c75;font-family:'Liberation Sans',sans-serif;letter-spacing:0.133px;">configureStart:779, ContextConfig</span>
<span class="t" id="t77" style="left:1054.50px;top:947.00px;font-size:17px;line-height:17px;color:#7d7c75;font-family:'Liberation Sans',sans-serif;letter-spacing:0.027px;font-style:italic;">(org.apache.catalina.startup)</span>
<span class="t" id="t78" style="left:788.70px;top:973.00px;font-size:17px;line-height:17px;color:#7d7c75;font-family:'Liberation Sans',sans-serif;letter-spacing:-0.009px;">lifecycleEvent:299, ContextConfig</span>
<span class="t" id="t79" style="left:1047.20px;top:973.00px;font-size:17px;line-height:17px;color:#7d7c75;font-family:'Liberation Sans',sans-serif;letter-spacing:0.048px;font-style:italic;">(org.apache.catalina.startup)</span>
<span class="t" id="t80" style="left:788.70px;top:999.00px;font-size:17px;line-height:17px;color:#7d7c75;font-family:'Liberation Sans',sans-serif;letter-spacing:-0.274px;">fireLifecycleEvent:123, LifecycleBase</span>
<span class="t" id="t81" style="left:1064.50px;top:999.00px;font-size:17px;line-height:17px;color:#7d7c75;font-family:'Liberation Sans',sans-serif;letter-spacing:0.051px;font-style:italic;">(org.apache.catalina.util)</span>
<span class="t" id="t82" style="left:788.70px;top:1025.00px;font-size:17px;line-height:17px;color:#7d7c75;font-family:'Liberation Sans',sans-serif;letter-spacing:-0.307px;clip-path:inset(0 0 15px 0);">setStateInternal:5094, StandardContext</span>
<span class="t" id="t83" style="left:1080.80px;top:1025.00px;font-size:17px;line-height:17px;color:#7d7c75;font-family:'Liberation Sans',sans-serif;letter-spacing:-0.293px;font-style:italic;clip-path:inset(0 0 15px 0);">(org.apache.catalina.core)</span>
<span class="t" id="t84" style="left:1598.70px;top:856.00px;font-size:17px;line-height:17px;color:#f3816f;font-family:'Liberation Sans',sans-serif;letter-spacing:0.408px;">this</span>
<span class="t" id="t85" style="left:1631.10px;top:856.00px;font-size:17px;line-height:17px;color:#bbbbbb;font-family:'Liberation Sans',sans-serif;">=</span>
<span class="t" id="t86" style="left:1647.60px;top:856.00px;font-size:17px;line-height:17px;color:#8a8d8f;font-family:'Liberation Sans',sans-serif;letter-spacing:0.056px;">{ContextConfig@2634}</span>
<span class="t" id="t87" style="left:1598.70px;top:881.00px;font-size:17px;line-height:17px;color:#f3816f;font-family:'Liberation Sans',sans-serif;letter-spacing:0.379px;">webxml</span>
<span class="t" id="t88" style="left:1663.70px;top:881.00px;font-size:17px;line-height:17px;color:#bbbbbb;font-family:'Liberation Sans',sans-serif;">=</span>
<span class="t" id="t89" style="left:1679.70px;top:881.00px;font-size:17px;line-height:17px;color:#8a8d8f;font-family:'Liberation Sans',sans-serif;letter-spacing:-0.181px;">{WebXml@2629}</span>
<span class="t" id="t90" style="left:1813.50px;top:881.00px;font-size:17px;line-height:17px;color:#4f7fbf;font-family:'Liberation Sans',sans-serif;letter-spacing:0.063px;">... toString()</span>
<span class="t" id="t91" style="left:1598.70px;top:906.00px;font-size:17px;line-height:17px;color:#f3816f;font-family:'Liberation Sans',sans-serif;letter-spacing:-0.027px;">allAuthenticatedUsersIsAppRole</span>
<span class="t" id="t92" style="left:1846.30px;top:906.00px;font-size:17px;line-height:17px;color:#bbbbbb;font-family:'Liberation Sans',sans-serif;">=</span>
<span class="t" id="t93" style="left:1862.40px;top:906.00px;font-size:17px;line-height:17px;color:#d0d0d0;font-family:'Liberation Sans',sans-serif;letter-spacing:0.076px;">false</span>
<span class="t" id="t94" style="left:1598.70px;top:931.00px;font-size:17px;line-height:17px;color:#589df6;font-family:'Liberation Sans',sans-serif;letter-spacing:0.361px;">entry</span>
<span class="t" id="t95" style="left:1643.80px;top:931.00px;font-size:17px;line-height:17px;color:#bbbbbb;font-family:'Liberation Sans',sans-serif;">=</span>
<span class="t" id="t96" style="left:1659.90px;top:931.00px;font-size:17px;line-height:17px;color:#8a8d8f;font-family:'Liberation Sans',sans-serif;letter-spacing:-0.074px;">{HashMap$Node@2737}</span>
<span class="t" id="t97" style="left:1852.90px;top:931.00px;font-size:17px;line-height:17px;color:#6a8759;font-family:'Liberation Sans',sans-serif;letter-spacing:0.243px;">"/servlet"</span>
<span class="t" id="t98" style="left:1927.80px;top:931.00px;font-size:17px;line-height:17px;color:#8a8d8f;font-family:'Liberation Sans',sans-serif;letter-spacing:0.903px;">-&gt;</span>
<span class="t" id="t99" style="left:1950.80px;top:931.00px;font-size:17px;line-height:17px;color:#6a8759;font-family:'Liberation Sans',sans-serif;letter-spacing:0.026px;">"ServletTest"</span>
<span class="t" id="t100" style="left:1598.70px;top:956.00px;font-size:17px;line-height:17px;color:#f3816f;font-family:'Liberation Sans',sans-serif;letter-spacing:0.242px;">this.context</span>
<span class="t" id="t101" style="left:1692.30px;top:956.00px;font-size:17px;line-height:17px;color:#bbbbbb;font-family:'Liberation Sans',sans-serif;">=</span>
<span class="t" id="t102" style="left:1708.40px;top:956.00px;font-size:17px;line-height:17px;color:#8a8d8f;font-family:'Liberation Sans',sans-serif;letter-spacing:-0.014px;">{StandardContext@2637}</span>
<span class="t" id="t103" style="left:1907.60px;top:956.00px;font-size:17px;line-height:17px;color:#4f7fbf;font-family:'Liberation Sans',sans-serif;letter-spacing:0.092px;">... toString()</span>
<span class="t" id="t104" style="left:56.70px;top:1034.00px;font-size:14px;line-height:14px;color:#bbbbbb;font-family:'Liberation Sans',sans-serif;letter-spacing:0.036px;">Git</span>
<span class="t" id="t105" style="left:116.70px;top:1034.00px;font-size:14px;line-height:14px;color:#bbbbbb;font-family:'Liberation Sans',sans-serif;letter-spacing:-0.209px;">Find</span>
<span class="t" id="t106" style="left:185.30px;top:1034.00px;font-size:14px;line-height:14px;color:#bbbbbb;font-family:'Liberation Sans',sans-serif;letter-spacing:-0.076px;">TODO</span>
<span class="t" id="t107" style="left:269.50px;top:1034.00px;font-size:14px;line-height:14px;color:#bbbbbb;font-family:'Liberation Sans',sans-serif;letter-spacing:-0.218px;">Problems</span>
<span class="t" id="t108" style="left:370.50px;top:1034.00px;font-size:14px;line-height:14px;color:#bbbbbb;font-family:'Liberation Sans',sans-serif;letter-spacing:0.055px;">Profiler</span>
<span class="t" id="t109" style="left:458.60px;top:1034.00px;font-size:14px;line-height:14px;color:#bbbbbb;font-family:'Liberation Sans',sans-serif;letter-spacing:-0.063px;">Terminal</span>
<span class="t" id="t110" style="left:556.30px;top:1034.00px;font-size:14px;line-height:14px;color:#bbbbbb;font-family:'Liberation Sans',sans-serif;letter-spacing:-0.053px;">Endpoints</span>
<span class="t" id="t111" style="left:661.40px;top:1034.00px;font-size:14px;line-height:14px;color:#bbbbbb;font-family:'Liberation Sans',sans-serif;letter-spacing:-0.148px;">Build</span>
<span class="t" id="t112" style="left:737.50px;top:1034.00px;font-size:14px;line-height:14px;color:#bbbbbb;font-family:'Liberation Sans',sans-serif;letter-spacing:-0.243px;">Dependencies</span>
<span class="t" id="t113" style="left:870.00px;top:1034.00px;font-size:14px;line-height:14px;color:#e0e0e0;font-family:'Liberation Sans',sans-serif;letter-spacing:-0.398px;">Services</span>
<span class="t" id="t114" style="left:2327.70px;top:1034.00px;font-size:14px;line-height:14px;color:#bbbbbb;font-family:'Liberation Sans',sans-serif;letter-spacing:-0.140px;">Event Log</span>
<span class="t" id="t115" style="left:32.70px;top:1059.00px;font-size:17px;line-height:17px;color:#bbbbbb;font-family:'Liberation Sans',sans-serif;letter-spacing:0.210px;">All files are up-to-date (2 minutes ago)</span>
<span class="t" id="t116" style="left:2096.30px;top:1059.00px;font-size:17px;line-height:17px;color:#bbbbbb;font-family:'Liberation Sans',sans-serif;letter-spacing:-0.600px;">1026:1</span>
<span class="t" id="t117" style="left:2160.60px;top:1059.00px;font-size:17px;line-height:17px;color:#808385;font-family:'Liberation Sans',sans-serif;letter-spacing:-1.200px;">CRLF</span>
<span class="t" id="t118" style="left:2214.90px;top:1059.00px;font-size:17px;line-height:17px;color:#808385;font-family:'Liberation Sans',sans-serif;letter-spacing:-0.334px;">UTF-8</span>
<span class="t" id="t119" style="left:2276.30px;top:1059.00px;font-size:17px;line-height:17px;color:#bbbbbb;font-family:'Liberation Sans',sans-serif;letter-spacing:-0.331px;">4 spaces</span>
<span class="t" id="t120" style="left:2377.70px;top:1059.00px;font-size:17px;line-height:17px;color:#bbbbbb;font-family:'Liberation Sans',sans-serif;letter-spacing:0.410px;">main</span>
<span class="t" id="t121" style="left:382.40px;top:150.00px;font-size:18.33px;line-height:18.33px;color:#606366;font-family:'Liberation Mono',monospace;letter-spacing:-1.200px;">1011</span>
<span class="t" id="t122" style="left:382.40px;top:181.00px;font-size:18.33px;line-height:18.33px;color:#606366;font-family:'Liberation Mono',monospace;letter-spacing:-1.200px;">1012</span>
<span class="t" id="t123" style="left:382.40px;top:212.00px;font-size:18.33px;line-height:18.33px;color:#606366;font-family:'Liberation Mono',monospace;letter-spacing:-1.200px;">1013</span>
<span class="t" id="t124" style="left:382.40px;top:243.00px;font-size:18.33px;line-height:18.33px;color:#606366;font-family:'Liberation Mono',monospace;letter-spacing:-1.200px;">1014</span>
<span class="t" id="t125" style="left:382.40px;top:274.00px;font-size:18.33px;line-height:18.33px;color:#606366;font-family:'Liberation Mono',monospace;letter-spacing:-1.200px;">1015</span>
<span class="t" id="t126" style="left:382.40px;top:305.00px;font-size:18.33px;line-height:18.33px;color:#606366;font-family:'Liberation Mono',monospace;letter-spacing:-1.200px;">1016</span>
<span class="t" id="t127" style="left:382.40px;top:336.00px;font-size:18.33px;line-height:18.33px;color:#606366;font-family:'Liberation Mono',monospace;letter-spacing:-1.200px;">1017</span>
<span class="t" id="t128" style="left:382.40px;top:367.00px;font-size:18.33px;line-height:18.33px;color:#606366;font-family:'Liberation Mono',monospace;letter-spacing:-1.200px;">1018</span>
<span class="t" id="t129" style="left:382.40px;top:398.00px;font-size:18.33px;line-height:18.33px;color:#606366;font-family:'Liberation Mono',monospace;letter-spacing:-1.200px;">1019</span>
<span class="t" id="t130" style="left:382.40px;top:429.00px;font-size:18.33px;line-height:18.33px;color:#606366;font-family:'Liberation Mono',monospace;letter-spacing:-1.200px;">1020</span>
<span class="t" id="t131" style="left:382.40px;top:460.00px;font-size:18.33px;line-height:18.33px;color:#606366;font-family:'Liberation Mono',monospace;letter-spacing:-1.200px;">1021</span>
<span class="t" id="t132" style="left:382.40px;top:491.00px;font-size:18.33px;line-height:18.33px;color:#606366;font-family:'Liberation Mono',monospace;letter-spacing:-1.200px;">1022</span>
<span class="t" id="t133" style="left:382.40px;top:522.00px;font-size:18.33px;line-height:18.33px;color:#606366;font-family:'Liberation Mono',monospace;letter-spacing:-1.200px;">1023</span>
<span class="t" id="t134" style="left:382.40px;top:553.00px;font-size:18.33px;line-height:18.33px;color:#606366;font-family:'Liberation Mono',monospace;letter-spacing:-1.200px;">1024</span>
<span class="t" id="t135" style="left:382.40px;top:584.00px;font-size:18.33px;line-height:18.33px;color:#606366;font-family:'Liberation Mono',monospace;letter-spacing:-1.200px;">1025</span>
<span class="t" id="t136" style="left:382.40px;top:615.00px;font-size:18.33px;line-height:18.33px;color:#a4a3a3;font-family:'Liberation Mono',monospace;letter-spacing:-1.200px;">1026</span>
<span class="t" id="t137" style="left:382.40px;top:646.00px;font-size:18.33px;line-height:18.33px;color:#606366;font-family:'Liberation Mono',monospace;letter-spacing:-1.200px;">1027</span>
<span class="t" id="t138" style="left:382.40px;top:677.00px;font-size:18.33px;line-height:18.33px;color:#606366;font-family:'Liberation Mono',monospace;letter-spacing:-1.200px;">1028</span>
<span class="t" id="t139" style="left:382.40px;top:708.00px;font-size:18.33px;line-height:18.33px;color:#606366;font-family:'Liberation Mono',monospace;letter-spacing:-1.200px;">1029</span>
<span class="t" id="t140" style="left:382.40px;top:739.00px;font-size:18.33px;line-height:18.33px;color:#606366;font-family:'Liberation Mono',monospace;letter-spacing:-1.200px;clip-path:inset(0 0 14.300px 0);">1030</span>
<div class="r" style="left:364px;top:218px;width:10px;height:189px;background:rgba(166,166,166,0.280);"></div>
<div class="r" style="left:29px;top:731px;width:118px;height:11px;background:rgba(166,166,166,0.280);"></div>
<div class="r" style="left:111px;top:731px;width:1px;height:11px;background:#808080;"></div>
<div class="c" style="left:475px;top:143px;width:1927px;height:600px;"><div style="position:absolute;left:-475px;top:-143px;"><span class="t" style="left:615px;top:181.00px;font:18.33px/18.33px 'Liberation Mono',monospace;"><span style="color:#cc7832;">if </span><span style="color:#a9b7c6;">(servlet.getAsyncSupported() != </span><span style="color:#cc7832;">null</span><span style="color:#a9b7c6;">) {</span></span>
<span class="t" style="left:659px;top:212.00px;font:18.33px/18.33px 'Liberation Mono',monospace;"><span style="color:#a9b7c6;">wrapper.setAsyncSupported(servlet.getAsyncSupported())</span><span style="color:#cc7832;">;</span></span>
<span class="t" style="left:615px;top:243.00px;font:18.33px/18.33px 'Liberation Mono',monospace;"><span style="color:#a9b7c6;">}</span></span>
<span class="t" style="left:615px;top:305.00px;font:18.33px/18.33px 'Liberation Mono',monospace;"><span style="color:#a9b7c6;">wrapper.setOverridable(servlet.isOverridable())</span><span style="color:#cc7832;">;</span></span>
<span class="t" style="left:615px;top:336.00px;font:18.33px/18.33px 'Liberation Mono',monospace;"><span style="color:#cc7832;">this</span><span style="color:#a9b7c6;">.</span><span style="color:#9876aa;">context</span><span style="color:#a9b7c6;">.addChild(wrapper)</span><span style="color:#cc7832;">;</span></span>
<span class="t" style="left:571px;top:367.00px;font:18.33px/18.33px 'Liberation Mono',monospace;"><span style="color:#a9b7c6;">}</span></span>
<span class="t" style="left:571px;top:429.00px;font:18.33px/18.33px 'Liberation Mono',monospace;"><span style="color:#a9b7c6;text-decoration:underline;text-underline-offset:3px;text-decoration-thickness:1px;">var35</span><span style="color:#a9b7c6;"> = webxml.getServletMappings().entrySet().iterator()</span><span style="color:#cc7832;">;</span></span>
<span class="t" style="left:1234px;top:429.00px;font:italic 18.33px/18.33px 'Liberation Mono',monospace;"><span style="color:#787878;">webxml: WebXml@2629</span></span>
<span class="t" style="left:571px;top:491.00px;font:18.33px/18.33px 'Liberation Mono',monospace;"><span style="color:#cc7832;">while</span><span style="color:#a9b7c6;">(</span><span style="color:#a9b7c6;text-decoration:underline;text-underline-offset:3px;text-decoration-thickness:1px;">var35</span><span style="color:#a9b7c6;">.hasNext()) {</span></span>
<span class="t" style="left:615px;top:522.00px;font:18.33px/18.33px 'Liberation Mono',monospace;"><span style="color:#a9b7c6;">Entry&lt;String</span><span style="color:#cc7832;">,</span><span style="color:#a9b7c6;"> String&gt; entry = (Entry)</span><span style="color:#a9b7c6;text-decoration:underline;text-underline-offset:3px;text-decoration-thickness:1px;">var35</span><span style="color:#a9b7c6;">.next()</span><span style="color:#cc7832;">;</span></span>
<span class="t" style="left:1191px;top:522.00px;font:italic 18.33px/18.33px 'Liberation Mono',monospace;"><span style="color:#787878;">entry: </span><span style="color:#ca7e03;">"/servlet" -&gt; "ServletTest"</span></span>
<span class="t" style="left:615px;top:553.00px;font:18.33px/18.33px 'Liberation Mono',monospace;"><span style="color:#cc7832;">this</span><span style="color:#a9b7c6;">.</span><span style="color:#9876aa;">context</span><span style="color:#a9b7c6;">.addServletMappingDecoded((String)entry.getKey()</span><span style="color:#cc7832;">,</span><span style="color:#a9b7c6;"> (String)entry.getValue())</span><span style="color:#cc7832;">;</span></span>
<span class="t" style="left:1609px;top:553.00px;font:italic 18.33px/18.33px 'Liberation Mono',monospace;"><span style="color:#7f9bb8;">entry: </span><span style="color:#e08b13;">"/servlet" -&gt; "ServletTest"</span></span>
<span class="t" style="left:2025px;top:553.00px;font:italic 18.33px/18.33px 'Liberation Mono',monospace;"><span style="color:#7f9bb8;">context: StandardContext@2637</span></span>
<span class="t" style="left:571px;top:584.00px;font:18.33px/18.33px 'Liberation Mono',monospace;"><span style="color:#a9b7c6;">}</span></span>
<span class="t" style="left:571px;top:646.00px;font:18.33px/18.33px 'Liberation Mono',monospace;"><span style="color:#a9b7c6;">SessionConfig sessionConfig = webxml.getSessionConfig()</span><span style="color:#cc7832;">;</span></span>
<span class="t" style="left:571px;top:677.00px;font:18.33px/18.33px 'Liberation Mono',monospace;"><span style="color:#cc7832;">if </span><span style="color:#a9b7c6;">(sessionConfig != </span><span style="color:#cc7832;">null</span><span style="color:#a9b7c6;">) {</span></span>
<span class="t" style="left:615px;top:708.00px;font:18.33px/18.33px 'Liberation Mono',monospace;"><span style="color:#cc7832;">if </span><span style="color:#a9b7c6;">(sessionConfig.getSessionTimeout() != </span><span style="color:#cc7832;">null</span><span style="color:#a9b7c6;">) {</span></span>
<span class="t" style="left:659px;top:739.00px;font:18.33px/18.33px 'Liberation Mono',monospace;"><span style="color:#cc7832;">this</span><span style="color:#a9b7c6;">.</span><span style="color:#9876aa;">context</span><span style="color:#a9b7c6;">.setSessionTimeout(sessionConfig.getSessionTimeout())</span><span style="color:#cc7832;">;</span></span></div></div>
<div class="r" style="left:484px;top:731px;width:1458px;height:11px;background:rgba(140,140,140,0.380);"></div>
<span class="t" style="left:75.2px;top:120.6px;font:bold 12px/13px 'Liberation Sans',sans-serif;color:#4db6ac;letter-spacing:-0.8px;">AZ</span>
<span class="t" style="left:119.5px;top:115px;font:italic 19px/19px 'Liberation Serif',serif;color:#aed581;">f</span>
<span class="t" style="left:1582.200px;top:907.800px;font:bold 12px/13px 'Liberation Sans',sans-serif;color:#263238;">1</span>
</body></html>
